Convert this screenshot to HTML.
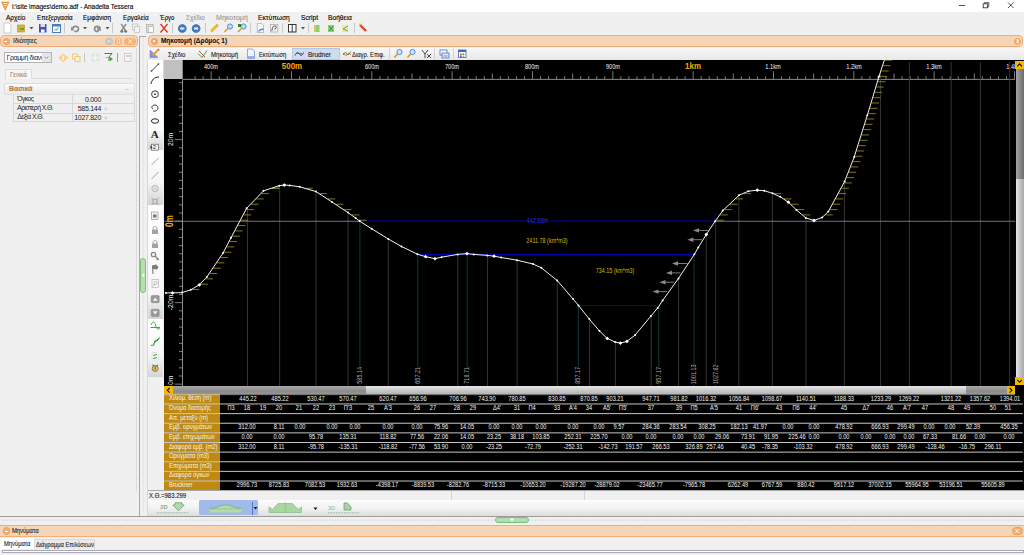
<!DOCTYPE html><html><head><meta charset="utf-8"><style>
html,body{margin:0;padding:0;}
body{width:1024px;height:555px;overflow:hidden;position:relative;background:#f0f0f0;font-family:"Liberation Sans", sans-serif;}
.t{position:absolute;white-space:nowrap;line-height:1;font-family:"Liberation Sans", sans-serif;}
svg{position:absolute;left:0;top:0;overflow:visible}
.hdr{position:absolute;box-sizing:border-box;border:1.5px solid #f3ae76;background:#f6d4b6;border-radius:4px;}
.circ{position:absolute;border-radius:50%;box-sizing:border-box;}
</style></head><body>
<div style="position:absolute;left:0px;top:0px;width:1024px;height:12px;background:#fff"></div>
<svg width="1024" height="555" style="pointer-events:none"><path d="M1.5,2 L9,2 L5.2,10.5 Z" fill="#f5a050" stroke="#f08a30" stroke-width="0.6"/><path d="M3.5,3.5 L7,3.5" stroke="#fff" stroke-width="0.8"/><path d="M4.5,5.5 L6.5,5.5" stroke="#fff" stroke-width="0.8"/><path d="M959,5.5 L965,5.5" stroke="#222" stroke-width="0.8"/><rect x="983.2" y="3.8" width="4.5" height="4" fill="none" stroke="#222" stroke-width="0.8"/><path d="M984.5,3.8 L984.5,2.6 L988.8,2.6 L988.8,6.6 L987.7,6.6" fill="none" stroke="#222" stroke-width="0.7"/><path d="M1008,2.5 L1013.5,8 M1013.5,2.5 L1008,8" stroke="#222" stroke-width="0.8"/></svg>
<div class="t" style="left:11.60px;top:2.5px;font-size:7px;color:#000;transform:scaleX(0.917);transform-origin:0 0;-webkit-text-stroke:0.12px #000;">I:\site images\demo.adf - Anadelta Tessera</div>
<div class="t" style="left:5.80px;top:13.6px;font-size:7px;color:#000;transform:scaleX(0.929);transform-origin:0 0;-webkit-text-stroke:0.12px #000;">Αρχείο</div>
<div class="t" style="left:36.50px;top:13.6px;font-size:7px;color:#000;transform:scaleX(0.885);transform-origin:0 0;-webkit-text-stroke:0.12px #000;">Επεξεργασία</div>
<div class="t" style="left:83.10px;top:13.6px;font-size:7px;color:#000;transform:scaleX(0.920);transform-origin:0 0;-webkit-text-stroke:0.12px #000;">Εμφάνιση</div>
<div class="t" style="left:122.60px;top:13.6px;font-size:7px;color:#000;transform:scaleX(0.901);transform-origin:0 0;-webkit-text-stroke:0.12px #000;">Εργαλεία</div>
<div class="t" style="left:159.80px;top:13.6px;font-size:7px;color:#000;transform:scaleX(0.854);transform-origin:0 0;-webkit-text-stroke:0.12px #000;">Έργο</div>
<div class="t" style="left:185.60px;top:13.6px;font-size:7px;color:#999;transform:scaleX(0.923);transform-origin:0 0;-webkit-text-stroke:0.12px #999;">Σχέδιο</div>
<div class="t" style="left:215.50px;top:13.6px;font-size:7px;color:#999;transform:scaleX(1.015);transform-origin:0 0;-webkit-text-stroke:0.12px #999;">Μηκοτομή</div>
<div class="t" style="left:258.35px;top:13.6px;font-size:7px;color:#000;transform:scaleX(0.960);transform-origin:0 0;-webkit-text-stroke:0.12px #000;">Εκτύπωση</div>
<div class="t" style="left:300.60px;top:13.6px;font-size:7px;color:#000;transform:scaleX(0.956);transform-origin:0 0;-webkit-text-stroke:0.12px #000;">Script</div>
<div class="t" style="left:328.35px;top:13.6px;font-size:7px;color:#000;transform:scaleX(0.951);transform-origin:0 0;-webkit-text-stroke:0.12px #000;">Βοήθεια</div>
<svg width="1024" height="555"><path d="M4,23 L9,23 L11,25 L11,33 L4,33 Z" fill="#fff" stroke="#bbb" stroke-width="0.7"/><rect x="17.5" y="25" width="7" height="7" fill="#d8b040" stroke="#c09020" stroke-width="0.6"/><path d="M20,29 L24,29" stroke="#3a3" stroke-width="1.5"/><path d="M29.5,27 L33.5,27 L31.5,29.5 Z" fill="#555"/><rect x="39" y="24" width="7.5" height="8.5" fill="#4050c0"/><rect x="40.5" y="24" width="4.5" height="3" fill="#ddd"/><rect x="41" y="29.5" width="3.5" height="3" fill="#fff"/><rect x="52.5" y="24.5" width="8" height="8" fill="#fff" stroke="#4a7cc8" stroke-width="1"/><rect x="52.5" y="24.5" width="8" height="2" fill="#4a7cc8"/><path d="M54.5,29 L56,30.5 L58.5,27.5" stroke="#2a2" stroke-width="1" fill="none"/><path d="M64.5,23 L64.5,33" stroke="#c8c8c8" stroke-width="1"/><path d="M72.5,29 C73,25.5 78.5,25.5 78.5,28.8 C78.5,31.5 75.5,32 74.5,31" fill="none" stroke="#8a8a8a" stroke-width="1.7"/><path d="M71,26.5 L71,30.5 L74.5,30.5 Z" fill="#8a8a8a"/><path d="M83,27 L87,27 L85,29.5 Z" fill="#555"/><path d="M100,28.5 C99.5,25.5 94.5,25.5 94.5,28.8 C94.5,31.5 97.5,32 98.5,31" fill="none" stroke="#8a8a8a" stroke-width="1.7"/><rect x="97" y="27" width="4" height="4" fill="#9a9a9a"/><path d="M105.5,27 L109.5,27 L107.5,29.5 Z" fill="#555"/><path d="M112.5,23 L112.5,33" stroke="#c8c8c8" stroke-width="1"/><path d="M121.2,24 L125.2,30 M126,24 L122,30" stroke="#8a8a8a" stroke-width="1.4"/><circle cx="121.8" cy="31.2" r="1.5" fill="#7a7a7a"/><circle cx="125.6" cy="31.2" r="1.5" fill="#7a7a7a"/><rect x="132.5" y="24" width="5" height="6" fill="#f4f4f4" stroke="#bbb" stroke-width="0.7"/><rect x="134.5" y="26.5" width="5" height="6" fill="#f4f4f4" stroke="#bbb" stroke-width="0.7"/><rect x="146.5" y="24.5" width="6.5" height="8" fill="#ddd" stroke="#aaa" stroke-width="0.7"/><rect x="148.5" y="26.5" width="5" height="6" fill="#f8f8f8" stroke="#aaa" stroke-width="0.6"/><path d="M160.5,24 L167.5,32.5 M167.5,24 L160.5,32.5" stroke="#e83020" stroke-width="1.3"/><path d="M172.5,23 L172.5,33" stroke="#c8c8c8" stroke-width="1"/><circle cx="182.3" cy="28.5" r="4.3" fill="#2e68b4"/><circle cx="182.3" cy="28.5" r="3.6" fill="none" stroke="#5a90d0" stroke-width="0.6"/><path d="M184.5,27.2 L181.70000000000002,27.2 L181.70000000000002,26 L179.70000000000002,28.5 L181.70000000000002,31 L181.70000000000002,29.8 L184.5,29.8 Z" fill="#cfe0f4"/><circle cx="196.1" cy="28.5" r="4.3" fill="#2e68b4"/><circle cx="196.1" cy="28.5" r="3.6" fill="none" stroke="#5a90d0" stroke-width="0.6"/><path d="M193.9,27.2 L196.7,27.2 L196.7,26 L198.7,28.5 L196.7,31 L196.7,29.8 L193.9,29.8 Z" fill="#cfe0f4"/><path d="M205.5,23 L205.5,33" stroke="#c8c8c8" stroke-width="1"/><path d="M211,31.5 L218,24.5" stroke="#e8b830" stroke-width="2.8"/><circle cx="230" cy="26.5" r="2.6" fill="#bcd8f0" stroke="#4a8ad0" stroke-width="0.9"/><path d="M228,28.5 L224.5,32" stroke="#e89020" stroke-width="1.5"/><circle cx="243.5" cy="26.5" r="2.6" fill="#bcd8f0" stroke="#4a8ad0" stroke-width="0.9"/><path d="M241.5,28.5 L238,32" stroke="#e89020" stroke-width="1.5"/><rect x="238" y="24" width="3" height="3" fill="#2a8a2a"/><path d="M250.5,23 L250.5,33" stroke="#c8c8c8" stroke-width="1"/><path d="M257.3,23.5 L261.8,23.5 L263.5,25.2 L263.5,32.5 L257.3,32.5 Z" fill="#f8f8f8" stroke="#999" stroke-width="0.6"/><path d="M258.5,31.5 C260,29 261.5,29.5 263.5,29" stroke="#5a8ad0" stroke-width="1.3" fill="none"/><rect x="270.5" y="24.5" width="7.3" height="7.5" fill="#f4f4f4" stroke="#999" stroke-width="0.6"/><path d="M271.8,31 C272.5,27 273,25.8 275,26 C277,26.3 276.5,29 274.5,29" stroke="#222" stroke-width="0.8" fill="none"/><path d="M282.5,23 L282.5,33" stroke="#c8c8c8" stroke-width="1"/><rect x="288.5" y="24.5" width="7.5" height="7.5" fill="#fff" stroke="#222" stroke-width="0.9"/><path d="M292.2,24.5 L292.2,32" stroke="#222" stroke-width="0.9"/><path d="M301,27 L305,27 L303,29.5 Z" fill="#555"/><path d="M308.5,23 L308.5,33" stroke="#c8c8c8" stroke-width="1"/><rect x="314" y="25" width="5.5" height="7" fill="#8cd070"/><rect x="314" y="25" width="2" height="7" fill="#e8c050"/><rect x="328" y="25" width="6" height="7" fill="#8cd070"/><path d="M329,26 L333,31 M333,26 L329,31" stroke="#2a8a2a" stroke-width="0.9"/><rect x="342" y="25" width="6" height="7" fill="#f0e8a0"/><path d="M348,26 L343,29 L348,31" stroke="#5ab050" stroke-width="1" fill="none"/><path d="M354.5,23 L354.5,33" stroke="#c8c8c8" stroke-width="1"/><path d="M360,25 L366,31" stroke="#e04030" stroke-width="2.4"/><path d="M359.5,24.5 L362,24.5" stroke="#e8b830" stroke-width="1.5"/></svg>
<div class="hdr" style="left:0.3px;top:34.6px;width:138.2px;height:12.4px;border-radius:4px"></div>
<div class="circ" style="left:2.5px;top:37.5px;width:7.5px;height:7.5px;background:#f0b07c;border:0.8px solid #e09a60"></div>
<div style="position:absolute;left:4.3px;top:41px;width:3px;height:0.9px;background:#fff"></div>
<div class="t" style="left:12.60px;top:37.3px;font-size:7px;color:#222;transform:scaleX(0.871);transform-origin:0 0;-webkit-text-stroke:0.12px #222;">Ιδιότητες</div>
<div class="circ" style="left:105.3px;top:37.6px;width:7.6px;height:7.6px;background:#c4c4c4"></div>
<div class="circ" style="left:115px;top:37.6px;width:7.2px;height:7.6px;background:#f2b27a"></div>
<div style="position:absolute;left:124.4px;top:37.6px;width:11.8px;height:7.6px;border-radius:4px;background:#f2b27a"></div>
<svg width="1024" height="555"><path d="M107.2,42.2 L109,40.4 L110.8,42.2" stroke="#fff" stroke-width="0.8" fill="none"/><rect x="117.4" y="39.3" width="2.4" height="4.2" rx="1" fill="none" stroke="#fff" stroke-width="0.7"/><path d="M128.3,39.5 L132.3,43.3 M132.3,39.5 L128.3,43.3" stroke="#fff" stroke-width="0.9"/></svg>
<div style="position:absolute;left:4.3px;top:52px;width:47.5px;height:11px;box-sizing:border-box;border:1px solid #b4b4b4;background:#fff"></div>
<div style="position:absolute;left:42.3px;top:53px;width:8.5px;height:9px;background:#e6e6e6"></div>
<div class="t" style="left:6.5px;top:54.3px;font-size:7px;color:#1a1a4a;letter-spacing:-0.4px;width:35px;overflow:hidden">Γραμμή διανο</div>
<svg width="1024" height="555"><path d="M44.8,56.6 L46.5,58.4 L48.3,56.6" stroke="#555" stroke-width="0.6" fill="none"/><path d="M58.8,57.8 L63.2,54 L67.7,57.8 L63.2,61.6 Z" fill="#f8d890" stroke="#f0c060" stroke-width="0.7"/><path d="M63.2,55.5 L63.2,60" stroke="#fff" stroke-width="1.1"/><rect x="72.5" y="54" width="5" height="5" fill="#fff4d8" stroke="#f0c060" stroke-width="0.8"/><rect x="75" y="56.5" width="5" height="5" fill="#fff4d8" stroke="#f0c060" stroke-width="0.8"/><path d="M84.5,53 L84.5,62" stroke="#aaa" stroke-width="0.6"/><rect x="92" y="54" width="7" height="7" fill="#e8e8e8" stroke="#d4d4d4" stroke-width="0.5"/><path d="M95.5,54 L95.5,61 M92,57.5 L99,57.5" stroke="#fff" stroke-width="0.6"/><path d="M104.5,53.5 L112,53.5 L109,57 L109,61" stroke="#444" stroke-width="0.8" fill="none"/><path d="M105.5,57.5 L108,57.5" stroke="#d0a040" stroke-width="1"/><path d="M109.5,56.5 L113,59 L109.5,61.5 Z" fill="#30b030"/><path d="M117.5,53 L117.5,62" stroke="#666" stroke-width="0.6"/><rect x="124.5" y="53.5" width="6.5" height="8" fill="#f4f4f4" stroke="#bbb" stroke-width="0.6"/><path d="M126,56 L130,56" stroke="#e8a050" stroke-width="1"/></svg>
<div style="position:absolute;left:5px;top:69px;width:26.7px;height:10px;box-sizing:border-box;border:1px solid #dcdcdc;border-bottom:none;background:#f6f6f6"></div>
<div class="t" style="left:10.40px;top:71.2px;font-size:7px;color:#b08660;transform:scaleX(0.862);transform-origin:0 0;-webkit-text-stroke:0.12px #b08660;">Γενικά</div>
<div style="position:absolute;left:31.5px;top:78.3px;width:101.5px;height:1px;background:#dcdcdc"></div>
<div style="position:absolute;left:4px;top:78.3px;width:1px;height:1px;background:#dcdcdc"></div>
<div style="position:absolute;left:4px;top:83px;width:130.5px;height:11.5px;box-sizing:border-box;border:1px solid #dedede;border-radius:2px;background:linear-gradient(#fbfbfb,#e9e9e9)"></div>
<div class="t" style="left:8.60px;top:85.4px;font-size:7.6px;color:#b07a40;font-weight:bold;transform:scaleX(0.903);transform-origin:0 0;-webkit-text-stroke:0.12px #b07a40;">Βασικά</div>
<div style="position:absolute;left:124.5px;top:88.8px;width:4px;height:0.8px;background:#cfcfcf"></div>
<div style="position:absolute;left:13px;top:94.5px;width:121.5px;height:27.5px;box-sizing:border-box;border:1px solid #d8d8d8;border-top:none;background:#f0f0f0"></div>
<div style="position:absolute;left:13px;top:103.4px;width:121.5px;height:1px;background:#d8d8d8"></div>
<div style="position:absolute;left:13px;top:112.5px;width:121.5px;height:1px;background:#d8d8d8"></div>
<div style="position:absolute;left:72.3px;top:94.5px;width:1px;height:27.5px;background:#d8d8d8"></div>
<div class="t" style="left:17.3px;top:96.3px;font-size:6.8px;color:#222;letter-spacing:-0.55px">Όγκος</div>
<div class="t" style="left:60px;top:96.3px;width:41px;text-align:right;font-size:7px;color:#222;letter-spacing:-0.3px">0.000</div>
<div class="t" style="left:17.3px;top:105.4px;font-size:6.8px;color:#222;letter-spacing:-0.55px">Αριστερή Χ.Θ.</div>
<div class="t" style="left:60px;top:105.4px;width:41px;text-align:right;font-size:7px;color:#222;letter-spacing:-0.3px">585.144</div>
<svg width="1024" height="555"><path d="M104,109.0 L107.5,109.0 M105.75,107.2 L105.75,110.80000000000001" stroke="#c8c8c8" stroke-width="0.7"/></svg>
<div class="t" style="left:17.3px;top:114.4px;font-size:6.8px;color:#222;letter-spacing:-0.55px">Δεξιά Χ.Θ.</div>
<div class="t" style="left:60px;top:114.4px;width:41px;text-align:right;font-size:7px;color:#222;letter-spacing:-0.3px">1027.820</div>
<svg width="1024" height="555"><path d="M104,118.0 L107.5,118.0 M105.75,116.2 L105.75,119.80000000000001" stroke="#c8c8c8" stroke-width="0.7"/></svg>
<div style="position:absolute;left:136.3px;top:48px;width:0.8px;height:466px;background:#dcdcdc"></div>
<div style="position:absolute;left:139px;top:35.5px;width:1px;height:480px;background:#a8a8a8"></div>
<div style="position:absolute;left:139px;top:35.5px;width:7px;height:1px;background:#a8a8a8"></div>
<svg width="1024" height="555"><path d="M143.2,38 L143.2,512" stroke="#c8c8c8" stroke-width="0.8" stroke-dasharray="1 1.6"/></svg>
<div style="position:absolute;left:140.3px;top:258px;width:5.5px;height:35px;box-sizing:border-box;border:1px solid #80c080;border-radius:3px;background:#b8deb0"></div>
<svg width="1024" height="555"><path d="M144.2,273 L141.8,275.3 L144.2,277.6 Z" fill="#fff"/></svg>
<div class="hdr" style="left:147.5px;top:34.6px;width:875.8px;height:12.4px;border-radius:4px"></div>
<div class="circ" style="left:150.5px;top:37.6px;width:7.5px;height:7.5px;background:#f0b07c;border:0.8px solid #e09a60"></div>
<div style="position:absolute;left:153.2px;top:40.3px;width:2px;height:2px;background:#fff;border-radius:1px"></div>
<div class="t" style="left:160.60px;top:37.4px;font-size:7.5px;color:#111;font-weight:bold;transform:scaleX(0.857);transform-origin:0 0;-webkit-text-stroke:0.12px #111;">Μηκοτομή (Δρόμος 1)</div>
<div class="circ" style="left:1014.2px;top:37.6px;width:7px;height:7px;background:#f2b27a;border:0.6px solid #e8a060"></div>
<svg width="1024" height="555"><path d="M1016.4,40.2 L1017.7,38.9 L1019,40.2 Z" fill="#fff"/><path d="M1016.4,42.4 L1017.7,43.6 L1019,42.4 Z" fill="#fff"/><rect x="1016.9" y="39.9" width="1.6" height="2.6" fill="#fff" opacity="0.8"/></svg>
<div style="position:absolute;left:147.5px;top:47.5px;width:876.5px;height:12.5px;background:linear-gradient(#f8f8f8,#e8e8e8)"></div>
<div style="position:absolute;left:291.8px;top:47.5px;width:47.8px;height:12.7px;box-sizing:border-box;border:1px solid #b4c8e8;background:#cddcf2"></div>
<div class="t" style="left:167.60px;top:51.1px;font-size:7px;color:#222;transform:scaleX(0.850);transform-origin:0 0;-webkit-text-stroke:0.12px #222;">Σχέδιο</div>
<div class="t" style="left:211.00px;top:51.1px;font-size:7px;color:#222;transform:scaleX(0.866);transform-origin:0 0;-webkit-text-stroke:0.12px #222;">Μηκοτομή</div>
<div class="t" style="left:258.60px;top:51.1px;font-size:7px;color:#222;transform:scaleX(0.820);transform-origin:0 0;-webkit-text-stroke:0.12px #222;">Εκτύπωση</div>
<div class="t" style="left:308.10px;top:51.1px;font-size:7px;color:#222;transform:scaleX(0.920);transform-origin:0 0;-webkit-text-stroke:0.12px #222;">Brudner</div>
<div class="t" style="left:351.60px;top:51.1px;font-size:7px;color:#222;transform:scaleX(0.832);transform-origin:0 0;-webkit-text-stroke:0.12px #222;">Διαγρ. Επιφ.</div>
<svg width="1024" height="555"><path d="M150,57.5 L150,50 L158,57.5 Z" fill="#8890e8" stroke="#6a78d8" stroke-width="0.5"/><path d="M152.5,55.5 L158.5,49.5" stroke="#e8a030" stroke-width="1.8"/><path d="M158,49 L159.3,50.3" stroke="#e05050" stroke-width="1.2"/><path d="M198,53.5 L202,57.5 L207,50.5" stroke="#30b030" stroke-width="1" fill="none"/><path d="M199,51 L205,57" stroke="#c03030" stroke-width="0.9"/><path d="M247.5,49 L252.5,49 L254.5,51 L254.5,58.5 L247.5,58.5 Z" fill="#f0f4ff" stroke="#6a8ad0" stroke-width="0.7"/><path d="M248,57 L254,57" stroke="#5a8ad0" stroke-width="1.2"/><path d="M295,55.5 C296.5,52 298,52 299.5,54 C301,56 302,56 303.5,52.5" stroke="#222" stroke-width="0.9" fill="none"/><path d="M296,53.5 L302,53.5" stroke="#d03030" stroke-width="0.8"/><path d="M343,55 L345.5,52 L348,55 L351,51.5" stroke="#30a030" stroke-width="0.9" fill="none"/><path d="M343,53 L346,55.5 L349,53 L351,55" stroke="#d03030" stroke-width="0.8" fill="none"/><path d="M389.5,48.5 L389.5,59" stroke="#c8c8c8" stroke-width="0.8"/><circle cx="399.5" cy="52" r="2.6" fill="#cde4f8" stroke="#3a88d8" stroke-width="0.9"/><path d="M397.7,53.8 L394.5,57.5" stroke="#e89020" stroke-width="1.5"/><circle cx="412.5" cy="52" r="2.6" fill="#cde4f8" stroke="#3a88d8" stroke-width="0.9"/><path d="M410.7,53.8 L407.5,57.5" stroke="#e89020" stroke-width="1.5"/><path d="M422,50 L425,54 L428,50 M425,54 L425,58" stroke="#222" stroke-width="0.8" fill="none"/><path d="M427,58 L431,54" stroke="#222" stroke-width="0.6"/><path d="M427,54 L431,58 M431,54 L427,58" stroke="#222" stroke-width="0.7"/><path d="M434.5,48.5 L434.5,59" stroke="#c8c8c8" stroke-width="0.8"/><rect x="440" y="50" width="7" height="5" fill="#fff" stroke="#3a78c8" stroke-width="0.8"/><rect x="442" y="53" width="7" height="5" fill="#e0ecfa" stroke="#3a78c8" stroke-width="0.8"/><path d="M443.5,56 L447.5,56" stroke="#d04040" stroke-width="0.8"/><path d="M453.5,48.5 L453.5,59" stroke="#c8c8c8" stroke-width="0.8"/><rect x="458.5" y="50" width="7.5" height="7.5" fill="#fff" stroke="#3a68c0" stroke-width="0.8"/><rect x="458.5" y="50" width="7.5" height="2" fill="#3a68c0"/><rect x="460" y="53.5" width="1.8" height="1.5" fill="#e05030"/><rect x="462.5" y="53.5" width="1.8" height="1.5" fill="#30a030"/><rect x="460" y="55.5" width="1.8" height="1.5" fill="#3a78c8"/><rect x="462.5" y="55.5" width="1.8" height="1.5" fill="#e0b030"/></svg>
<div style="position:absolute;left:146px;top:60px;width:1.5px;height:456px;background:#f0f0f0"></div>
<div style="position:absolute;left:147.8px;top:60px;width:15.7px;height:90px;background:linear-gradient(#ffffff 0%,#fbfbfb 78%,#d4d4d4 100%)"></div>
<div style="position:absolute;left:147.8px;top:150px;width:15.7px;height:54.5px;background:linear-gradient(#ffffff 0%,#f4f4f4 60%,#d4d4d4 100%)"></div>
<div style="position:absolute;left:147.8px;top:204.5px;width:15.7px;height:114.5px;background:linear-gradient(#ffffff 0%,#f6f6f6 78%,#d4d4d4 100%)"></div>
<div style="position:absolute;left:147.8px;top:319px;width:15.7px;height:57.5px;background:linear-gradient(#ffffff 0%,#f6f6f6 65%,#d4d4d4 100%)"></div>
<div style="position:absolute;left:147.8px;top:376.5px;width:15.7px;height:113px;background:#f0f0f0"></div>
<div class="t" style="left:150.8px;top:129.3px;font-size:11px;font-family:'Liberation Serif',serif;font-weight:bold;color:#222">A</div>
<svg width="1024" height="555"><path d="M151.5,71 L158.5,64" stroke="#222" stroke-width="0.9"/><circle cx="151.5" cy="71" r="0.8" fill="#222"/><circle cx="158.5" cy="64" r="0.8" fill="#222"/><path d="M151,84 C151.5,80 154.5,77 159,77" stroke="#222" stroke-width="1" fill="none"/><circle cx="155" cy="94.2" r="3.4" fill="none" stroke="#222" stroke-width="0.9"/><circle cx="155" cy="94.2" r="0.9" fill="#222"/><path d="M153,109 C150.5,107.5 152.5,105 155,105 C158.5,105 159,110 155.5,111 L153,111" stroke="#222" stroke-width="0.9" fill="none"/><ellipse cx="155" cy="121" rx="3.6" ry="2.2" fill="none" stroke="#222" stroke-width="1"/><rect x="151.5" y="144.2" width="7" height="6" fill="#eee" stroke="#555" stroke-width="0.6"/><path d="M150.5,145.7 L152.5,147.2 L150.5,148.7" fill="#222"/><text x="153" y="149.2" font-size="5" font-family="Liberation Sans" fill="#222">2</text><path d="M151.5,165 L158.5,158" stroke="#9c9c9c" stroke-width="0.9"/><path d="M151.5,179 L158.5,172" stroke="#9c9c9c" stroke-width="0.9"/><circle cx="155" cy="188.5" r="3.2" fill="none" stroke="#a8a8a8" stroke-width="0.8"/><path d="M153.3,186.8 L156.7,190.2 M156.7,186.8 L153.3,190.2" stroke="#a8a8a8" stroke-width="0.6"/><path d="M151.5,198 C154,200 156,200 158.5,198 M151.5,205 C154,203 156,203 158.5,205 M153,199.5 L153,203.5 M157,199.5 L157,203.5" stroke="#9a9a9a" stroke-width="0.9" fill="none"/><rect x="151.5" y="212" width="6.5" height="7.5" fill="#f4f4f4" stroke="#888" stroke-width="0.6"/><rect x="153" y="214.5" width="3.5" height="3" fill="#7a7a7a"/><rect x="152" y="229.5" width="6" height="4.5" fill="#a2a2a2"/><path d="M153.2,229.5 L153.2,228.0 C153.2,226.0 156.8,226.0 156.8,228.0 L156.8,229.5" stroke="#a2a2a2" stroke-width="1" fill="none"/><rect x="152" y="243.5" width="6" height="4.5" fill="#a2a2a2"/><path d="M153.2,243.5 L153.2,242.0 C153.2,240.0 156.8,240.0 156.8,242.0 L156.8,243.5" stroke="#a2a2a2" stroke-width="1" fill="none"/><circle cx="153.5" cy="254.5" r="2.2" fill="none" stroke="#8a8a8a" stroke-width="1.3"/><path d="M155,256 L158.8,259.8 M157.8,258.8 L156.6,260" stroke="#8a8a8a" stroke-width="1.4"/><path d="M153,274 L152.5,265.5" stroke="#707070" stroke-width="1"/><path d="M152.5,265.5 L156,264.5 L158.5,267 L157,269.5 L153,269" fill="#7a7a7a"/><rect x="152" y="279.5" width="6.5" height="8" fill="#f8f8f8" stroke="#aaa" stroke-width="0.6"/><circle cx="155.5" cy="283" r="1.6" fill="none" stroke="#999" stroke-width="0.6"/><path d="M154.5,284.2 L153,286" stroke="#999" stroke-width="0.7"/><rect x="151.2" y="295.5" width="8" height="7.2" rx="1" fill="#9a9a9a" stroke="#808080" stroke-width="0.5"/><path d="M152.8,300.8 L155.2,297.6 L157.6,300.8 Z" fill="#f4f4f4"/><rect x="151.2" y="309.3" width="8" height="7.2" rx="1" fill="#9a9a9a" stroke="#808080" stroke-width="0.5"/><path d="M152.8,311.3 L155.2,314.5 L157.6,311.3 Z" fill="#f4f4f4"/><path d="M150.5,327.5 L160,327.5" stroke="#8a6a30" stroke-width="0.9"/><path d="M151,325 C152.5,321 154.5,321 155.5,325 C156.5,329 158.5,330.5 159.5,328" stroke="#30b030" stroke-width="1" fill="none"/><path d="M150.8,345.5 L153.5,345 L155,341.5 L157.5,340 L159.8,337.5" stroke="#30a830" stroke-width="1.1" fill="none"/><circle cx="155" cy="341.5" r="0.7" fill="#205020"/><circle cx="157.5" cy="340" r="0.7" fill="#205020"/><path d="M152,352.5 L157,352.5 L158.5,354 L158.5,360 L152,360 Z" fill="#f8f8f8" stroke="#ccc" stroke-width="0.5"/><path d="M153.2,355.5 L157,354.5 M153.2,358.5 L157,357.5" stroke="#30a030" stroke-width="1.1"/><circle cx="155.2" cy="368.5" r="3" fill="#f0c050" stroke="#707070" stroke-width="0.9"/><path d="M152.3,364.8 L154,366 M158.1,364.8 L156.4,366 M155.2,366.5 L155.2,370" stroke="#444" stroke-width="0.8"/></svg>
<div style="position:absolute;left:163.5px;top:60px;width:851.5px;height:326px;background:#000"></div>
<svg width="1024" height="555"><rect x="163.5" y="60" width="19.2" height="19" fill="#c0c0c0"/><path d="M195.11,76.20 L195.11,79.5" stroke="#8a8a8a" stroke-width="0.9"/><path d="M203.14,76.20 L203.14,79.5" stroke="#8a8a8a" stroke-width="0.9"/><path d="M211.17,71.20 L211.17,79.5" stroke="#8a8a8a" stroke-width="0.9"/><path d="M219.21,76.20 L219.21,79.5" stroke="#8a8a8a" stroke-width="0.9"/><path d="M227.24,76.20 L227.24,79.5" stroke="#8a8a8a" stroke-width="0.9"/><path d="M235.27,76.20 L235.27,79.5" stroke="#8a8a8a" stroke-width="0.9"/><path d="M243.31,76.20 L243.31,79.5" stroke="#8a8a8a" stroke-width="0.9"/><path d="M251.34,73.50 L251.34,79.5" stroke="#8a8a8a" stroke-width="0.9"/><path d="M259.37,76.20 L259.37,79.5" stroke="#8a8a8a" stroke-width="0.9"/><path d="M267.41,76.20 L267.41,79.5" stroke="#8a8a8a" stroke-width="0.9"/><path d="M275.44,76.20 L275.44,79.5" stroke="#8a8a8a" stroke-width="0.9"/><path d="M283.47,76.20 L283.47,79.5" stroke="#8a8a8a" stroke-width="0.9"/><path d="M291.50,71.20 L291.50,79.5" stroke="#8a8a8a" stroke-width="0.9"/><path d="M299.54,76.20 L299.54,79.5" stroke="#8a8a8a" stroke-width="0.9"/><path d="M307.57,76.20 L307.57,79.5" stroke="#8a8a8a" stroke-width="0.9"/><path d="M315.60,76.20 L315.60,79.5" stroke="#8a8a8a" stroke-width="0.9"/><path d="M323.64,76.20 L323.64,79.5" stroke="#8a8a8a" stroke-width="0.9"/><path d="M331.67,73.50 L331.67,79.5" stroke="#8a8a8a" stroke-width="0.9"/><path d="M339.70,76.20 L339.70,79.5" stroke="#8a8a8a" stroke-width="0.9"/><path d="M347.74,76.20 L347.74,79.5" stroke="#8a8a8a" stroke-width="0.9"/><path d="M355.77,76.20 L355.77,79.5" stroke="#8a8a8a" stroke-width="0.9"/><path d="M363.80,76.20 L363.80,79.5" stroke="#8a8a8a" stroke-width="0.9"/><path d="M371.83,71.20 L371.83,79.5" stroke="#8a8a8a" stroke-width="0.9"/><path d="M379.87,76.20 L379.87,79.5" stroke="#8a8a8a" stroke-width="0.9"/><path d="M387.90,76.20 L387.90,79.5" stroke="#8a8a8a" stroke-width="0.9"/><path d="M395.93,76.20 L395.93,79.5" stroke="#8a8a8a" stroke-width="0.9"/><path d="M403.97,76.20 L403.97,79.5" stroke="#8a8a8a" stroke-width="0.9"/><path d="M412.00,73.50 L412.00,79.5" stroke="#8a8a8a" stroke-width="0.9"/><path d="M420.03,76.20 L420.03,79.5" stroke="#8a8a8a" stroke-width="0.9"/><path d="M428.07,76.20 L428.07,79.5" stroke="#8a8a8a" stroke-width="0.9"/><path d="M436.10,76.20 L436.10,79.5" stroke="#8a8a8a" stroke-width="0.9"/><path d="M444.13,76.20 L444.13,79.5" stroke="#8a8a8a" stroke-width="0.9"/><path d="M452.16,71.20 L452.16,79.5" stroke="#8a8a8a" stroke-width="0.9"/><path d="M460.20,76.20 L460.20,79.5" stroke="#8a8a8a" stroke-width="0.9"/><path d="M468.23,76.20 L468.23,79.5" stroke="#8a8a8a" stroke-width="0.9"/><path d="M476.26,76.20 L476.26,79.5" stroke="#8a8a8a" stroke-width="0.9"/><path d="M484.30,76.20 L484.30,79.5" stroke="#8a8a8a" stroke-width="0.9"/><path d="M492.33,73.50 L492.33,79.5" stroke="#8a8a8a" stroke-width="0.9"/><path d="M500.36,76.20 L500.36,79.5" stroke="#8a8a8a" stroke-width="0.9"/><path d="M508.40,76.20 L508.40,79.5" stroke="#8a8a8a" stroke-width="0.9"/><path d="M516.43,76.20 L516.43,79.5" stroke="#8a8a8a" stroke-width="0.9"/><path d="M524.46,76.20 L524.46,79.5" stroke="#8a8a8a" stroke-width="0.9"/><path d="M532.49,71.20 L532.49,79.5" stroke="#8a8a8a" stroke-width="0.9"/><path d="M540.53,76.20 L540.53,79.5" stroke="#8a8a8a" stroke-width="0.9"/><path d="M548.56,76.20 L548.56,79.5" stroke="#8a8a8a" stroke-width="0.9"/><path d="M556.59,76.20 L556.59,79.5" stroke="#8a8a8a" stroke-width="0.9"/><path d="M564.63,76.20 L564.63,79.5" stroke="#8a8a8a" stroke-width="0.9"/><path d="M572.66,73.50 L572.66,79.5" stroke="#8a8a8a" stroke-width="0.9"/><path d="M580.69,76.20 L580.69,79.5" stroke="#8a8a8a" stroke-width="0.9"/><path d="M588.73,76.20 L588.73,79.5" stroke="#8a8a8a" stroke-width="0.9"/><path d="M596.76,76.20 L596.76,79.5" stroke="#8a8a8a" stroke-width="0.9"/><path d="M604.79,76.20 L604.79,79.5" stroke="#8a8a8a" stroke-width="0.9"/><path d="M612.82,71.20 L612.82,79.5" stroke="#8a8a8a" stroke-width="0.9"/><path d="M620.86,76.20 L620.86,79.5" stroke="#8a8a8a" stroke-width="0.9"/><path d="M628.89,76.20 L628.89,79.5" stroke="#8a8a8a" stroke-width="0.9"/><path d="M636.92,76.20 L636.92,79.5" stroke="#8a8a8a" stroke-width="0.9"/><path d="M644.96,76.20 L644.96,79.5" stroke="#8a8a8a" stroke-width="0.9"/><path d="M652.99,73.50 L652.99,79.5" stroke="#8a8a8a" stroke-width="0.9"/><path d="M661.02,76.20 L661.02,79.5" stroke="#8a8a8a" stroke-width="0.9"/><path d="M669.06,76.20 L669.06,79.5" stroke="#8a8a8a" stroke-width="0.9"/><path d="M677.09,76.20 L677.09,79.5" stroke="#8a8a8a" stroke-width="0.9"/><path d="M685.12,76.20 L685.12,79.5" stroke="#8a8a8a" stroke-width="0.9"/><path d="M693.15,71.20 L693.15,79.5" stroke="#8a8a8a" stroke-width="0.9"/><path d="M701.19,76.20 L701.19,79.5" stroke="#8a8a8a" stroke-width="0.9"/><path d="M709.22,76.20 L709.22,79.5" stroke="#8a8a8a" stroke-width="0.9"/><path d="M717.25,76.20 L717.25,79.5" stroke="#8a8a8a" stroke-width="0.9"/><path d="M725.29,76.20 L725.29,79.5" stroke="#8a8a8a" stroke-width="0.9"/><path d="M733.32,73.50 L733.32,79.5" stroke="#8a8a8a" stroke-width="0.9"/><path d="M741.35,76.20 L741.35,79.5" stroke="#8a8a8a" stroke-width="0.9"/><path d="M749.39,76.20 L749.39,79.5" stroke="#8a8a8a" stroke-width="0.9"/><path d="M757.42,76.20 L757.42,79.5" stroke="#8a8a8a" stroke-width="0.9"/><path d="M765.45,76.20 L765.45,79.5" stroke="#8a8a8a" stroke-width="0.9"/><path d="M773.48,71.20 L773.48,79.5" stroke="#8a8a8a" stroke-width="0.9"/><path d="M781.52,76.20 L781.52,79.5" stroke="#8a8a8a" stroke-width="0.9"/><path d="M789.55,76.20 L789.55,79.5" stroke="#8a8a8a" stroke-width="0.9"/><path d="M797.58,76.20 L797.58,79.5" stroke="#8a8a8a" stroke-width="0.9"/><path d="M805.62,76.20 L805.62,79.5" stroke="#8a8a8a" stroke-width="0.9"/><path d="M813.65,73.50 L813.65,79.5" stroke="#8a8a8a" stroke-width="0.9"/><path d="M821.68,76.20 L821.68,79.5" stroke="#8a8a8a" stroke-width="0.9"/><path d="M829.72,76.20 L829.72,79.5" stroke="#8a8a8a" stroke-width="0.9"/><path d="M837.75,76.20 L837.75,79.5" stroke="#8a8a8a" stroke-width="0.9"/><path d="M845.78,76.20 L845.78,79.5" stroke="#8a8a8a" stroke-width="0.9"/><path d="M853.81,71.20 L853.81,79.5" stroke="#8a8a8a" stroke-width="0.9"/><path d="M861.85,76.20 L861.85,79.5" stroke="#8a8a8a" stroke-width="0.9"/><path d="M869.88,76.20 L869.88,79.5" stroke="#8a8a8a" stroke-width="0.9"/><path d="M877.91,76.20 L877.91,79.5" stroke="#8a8a8a" stroke-width="0.9"/><path d="M885.95,76.20 L885.95,79.5" stroke="#8a8a8a" stroke-width="0.9"/><path d="M893.98,73.50 L893.98,79.5" stroke="#8a8a8a" stroke-width="0.9"/><path d="M902.01,76.20 L902.01,79.5" stroke="#8a8a8a" stroke-width="0.9"/><path d="M910.05,76.20 L910.05,79.5" stroke="#8a8a8a" stroke-width="0.9"/><path d="M918.08,76.20 L918.08,79.5" stroke="#8a8a8a" stroke-width="0.9"/><path d="M926.11,76.20 L926.11,79.5" stroke="#8a8a8a" stroke-width="0.9"/><path d="M934.14,71.20 L934.14,79.5" stroke="#8a8a8a" stroke-width="0.9"/><path d="M942.18,76.20 L942.18,79.5" stroke="#8a8a8a" stroke-width="0.9"/><path d="M950.21,76.20 L950.21,79.5" stroke="#8a8a8a" stroke-width="0.9"/><path d="M958.24,76.20 L958.24,79.5" stroke="#8a8a8a" stroke-width="0.9"/><path d="M966.28,76.20 L966.28,79.5" stroke="#8a8a8a" stroke-width="0.9"/><path d="M974.31,73.50 L974.31,79.5" stroke="#8a8a8a" stroke-width="0.9"/><path d="M982.34,76.20 L982.34,79.5" stroke="#8a8a8a" stroke-width="0.9"/><path d="M990.38,76.20 L990.38,79.5" stroke="#8a8a8a" stroke-width="0.9"/><path d="M998.41,76.20 L998.41,79.5" stroke="#8a8a8a" stroke-width="0.9"/><path d="M1006.44,76.20 L1006.44,79.5" stroke="#8a8a8a" stroke-width="0.9"/><path d="M1014.47,71.20 L1014.47,79.5" stroke="#8a8a8a" stroke-width="0.9"/><path d="M182.7,79.4 L1015,79.4" stroke="#8a8a8a" stroke-width="1"/><path d="M182.5,79.5 L182.5,386" stroke="#8a8a8a" stroke-width="1"/><path d="M179.10,82.60 L182.5,82.60" stroke="#8a8a8a" stroke-width="0.9"/><path d="M179.10,90.75 L182.5,90.75" stroke="#8a8a8a" stroke-width="0.9"/><path d="M179.10,98.90 L182.5,98.90" stroke="#8a8a8a" stroke-width="0.9"/><path d="M179.10,107.05 L182.5,107.05" stroke="#8a8a8a" stroke-width="0.9"/><path d="M179.10,115.20 L182.5,115.20" stroke="#8a8a8a" stroke-width="0.9"/><path d="M179.10,123.35 L182.5,123.35" stroke="#8a8a8a" stroke-width="0.9"/><path d="M179.10,131.50 L182.5,131.50" stroke="#8a8a8a" stroke-width="0.9"/><path d="M174.80,139.65 L182.5,139.65" stroke="#8a8a8a" stroke-width="0.9"/><path d="M179.10,147.80 L182.5,147.80" stroke="#8a8a8a" stroke-width="0.9"/><path d="M179.10,155.95 L182.5,155.95" stroke="#8a8a8a" stroke-width="0.9"/><path d="M179.10,164.10 L182.5,164.10" stroke="#8a8a8a" stroke-width="0.9"/><path d="M179.10,172.25 L182.5,172.25" stroke="#8a8a8a" stroke-width="0.9"/><path d="M179.10,180.40 L182.5,180.40" stroke="#8a8a8a" stroke-width="0.9"/><path d="M179.10,188.55 L182.5,188.55" stroke="#8a8a8a" stroke-width="0.9"/><path d="M179.10,196.70 L182.5,196.70" stroke="#8a8a8a" stroke-width="0.9"/><path d="M179.10,204.85 L182.5,204.85" stroke="#8a8a8a" stroke-width="0.9"/><path d="M179.10,213.00 L182.5,213.00" stroke="#8a8a8a" stroke-width="0.9"/><path d="M174.80,221.15 L182.5,221.15" stroke="#8a8a8a" stroke-width="0.9"/><path d="M179.10,229.30 L182.5,229.30" stroke="#8a8a8a" stroke-width="0.9"/><path d="M179.10,237.45 L182.5,237.45" stroke="#8a8a8a" stroke-width="0.9"/><path d="M179.10,245.60 L182.5,245.60" stroke="#8a8a8a" stroke-width="0.9"/><path d="M179.10,253.75 L182.5,253.75" stroke="#8a8a8a" stroke-width="0.9"/><path d="M179.10,261.90 L182.5,261.90" stroke="#8a8a8a" stroke-width="0.9"/><path d="M179.10,270.05 L182.5,270.05" stroke="#8a8a8a" stroke-width="0.9"/><path d="M179.10,278.20 L182.5,278.20" stroke="#8a8a8a" stroke-width="0.9"/><path d="M179.10,286.35 L182.5,286.35" stroke="#8a8a8a" stroke-width="0.9"/><path d="M179.10,294.50 L182.5,294.50" stroke="#8a8a8a" stroke-width="0.9"/><path d="M174.80,302.65 L182.5,302.65" stroke="#8a8a8a" stroke-width="0.9"/><path d="M179.10,310.80 L182.5,310.80" stroke="#8a8a8a" stroke-width="0.9"/><path d="M179.10,318.95 L182.5,318.95" stroke="#8a8a8a" stroke-width="0.9"/><path d="M179.10,327.10 L182.5,327.10" stroke="#8a8a8a" stroke-width="0.9"/><path d="M179.10,335.25 L182.5,335.25" stroke="#8a8a8a" stroke-width="0.9"/><path d="M179.10,343.40 L182.5,343.40" stroke="#8a8a8a" stroke-width="0.9"/><path d="M179.10,351.55 L182.5,351.55" stroke="#8a8a8a" stroke-width="0.9"/><path d="M179.10,359.70 L182.5,359.70" stroke="#8a8a8a" stroke-width="0.9"/><path d="M179.10,367.85 L182.5,367.85" stroke="#8a8a8a" stroke-width="0.9"/><path d="M179.10,376.00 L182.5,376.00" stroke="#8a8a8a" stroke-width="0.9"/><path d="M174.80,384.15 L182.5,384.15" stroke="#8a8a8a" stroke-width="0.9"/></svg>
<div class="t" style="left:181.17px;top:64.1px;width:60px;text-align:center;font-size:6.8px;color:#f0f0f0;transform:scaleX(0.83)">400m</div>
<div class="t" style="left:261.50px;top:62px;width:60px;text-align:center;font-size:9px;color:#f4ac00;font-weight:bold;transform:scaleX(0.88)">500m</div>
<div class="t" style="left:341.83px;top:64.1px;width:60px;text-align:center;font-size:6.8px;color:#f0f0f0;transform:scaleX(0.83)">600m</div>
<div class="t" style="left:422.16px;top:64.1px;width:60px;text-align:center;font-size:6.8px;color:#f0f0f0;transform:scaleX(0.83)">700m</div>
<div class="t" style="left:502.49px;top:64.1px;width:60px;text-align:center;font-size:6.8px;color:#f0f0f0;transform:scaleX(0.83)">800m</div>
<div class="t" style="left:582.82px;top:64.1px;width:60px;text-align:center;font-size:6.8px;color:#f0f0f0;transform:scaleX(0.83)">900m</div>
<div class="t" style="left:663.15px;top:62px;width:60px;text-align:center;font-size:9px;color:#f4ac00;font-weight:bold;transform:scaleX(0.88)">1km</div>
<div class="t" style="left:743.48px;top:64.1px;width:60px;text-align:center;font-size:6.8px;color:#f0f0f0;transform:scaleX(0.83)">1.1km</div>
<div class="t" style="left:823.81px;top:64.1px;width:60px;text-align:center;font-size:6.8px;color:#f0f0f0;transform:scaleX(0.83)">1.2km</div>
<div class="t" style="left:904.14px;top:64.1px;width:60px;text-align:center;font-size:6.8px;color:#f0f0f0;transform:scaleX(0.83)">1.3km</div>
<div class="t" style="left:984.47px;top:64.1px;width:60px;text-align:center;font-size:6.8px;color:#f0f0f0;transform:scaleX(0.83)">1.4km</div>
<div class="t" style="left:140.50px;top:135.75px;width:60px;text-align:center;font-size:6.8px;color:#f0f0f0;font-weight:normal;transform:rotate(-90deg) scaleX(1.0)">20m</div>
<div class="t" style="left:139.80px;top:215.65px;width:60px;text-align:center;font-size:10px;color:#f4ac00;font-weight:bold;transform:rotate(-90deg) scaleX(0.83)">0m</div>
<div class="t" style="left:140.50px;top:298.75px;width:60px;text-align:center;font-size:6.8px;color:#f0f0f0;font-weight:normal;transform:rotate(-90deg) scaleX(1.0)">-20m</div>
<div class="t" style="left:140.50px;top:380.25px;width:60px;text-align:center;font-size:6.8px;color:#f0f0f0;font-weight:normal;transform:rotate(-90deg) scaleX(1.0)">-40m</div>
<svg width="1024" height="555"><defs><clipPath id="cvclip"><rect x="164" y="60.3" width="851" height="325.7"/></clipPath></defs><g clip-path="url(#cvclip)"><path d="M247.50,207.37 L247.50,386" stroke="#3a3a3a" stroke-width="0.9"/><path d="M279.63,185.65 L279.63,386" stroke="#3a3a3a" stroke-width="0.9"/><path d="M315.98,191.59 L315.98,386" stroke="#3a3a3a" stroke-width="0.9"/><path d="M348.11,212.68 L348.11,386" stroke="#3a3a3a" stroke-width="0.9"/><path d="M388.28,238.94 L388.28,386" stroke="#3a3a3a" stroke-width="0.9"/><path d="M457.76,254.39 L457.76,386" stroke="#3a3a3a" stroke-width="0.9"/><path d="M487.43,255.42 L487.43,386" stroke="#3a3a3a" stroke-width="0.9"/><path d="M517.11,260.23 L517.11,386" stroke="#3a3a3a" stroke-width="0.9"/><path d="M557.28,280.59 L557.28,386" stroke="#3a3a3a" stroke-width="0.9"/><path d="M589.41,319.23 L589.41,386" stroke="#3a3a3a" stroke-width="0.9"/><path d="M615.40,342.14 L615.40,386" stroke="#3a3a3a" stroke-width="0.9"/><path d="M651.15,315.80 L651.15,386" stroke="#3a3a3a" stroke-width="0.9"/><path d="M678.55,278.32 L678.55,386" stroke="#3a3a3a" stroke-width="0.9"/><path d="M706.26,234.56 L706.26,386" stroke="#3a3a3a" stroke-width="0.9"/><path d="M738.81,195.38 L738.81,386" stroke="#3a3a3a" stroke-width="0.9"/><path d="M772.42,193.27 L772.42,386" stroke="#3a3a3a" stroke-width="0.9"/><path d="M806.03,217.97 L806.03,386" stroke="#3a3a3a" stroke-width="0.9"/><path d="M844.44,181.79 L844.44,386" stroke="#3a3a3a" stroke-width="0.9"/><path d="M880.56,71.62 L880.56,386" stroke="#3a3a3a" stroke-width="0.9"/><path d="M909.42,62.00 L909.42,386" stroke="#3a3a3a" stroke-width="0.9"/><path d="M951.19,62.00 L951.19,386" stroke="#3a3a3a" stroke-width="0.9"/><path d="M980.43,62.00 L980.43,386" stroke="#3a3a3a" stroke-width="0.9"/><path d="M1009.66,62.00 L1009.66,386" stroke="#3a3a3a" stroke-width="0.9"/><path d="M359.90,221.29 L359.90,368.10 M359.90,384.5 L359.90,386" stroke="#104040" stroke-width="0.9"/><path d="M417.79,254.32 L417.79,368.10 M417.79,384.5 L417.79,386" stroke="#104040" stroke-width="0.9"/><path d="M467.19,253.62 L467.19,368.10 M467.19,384.5 L467.19,386" stroke="#104040" stroke-width="0.9"/><path d="M578.42,305.40 L578.42,368.10 M578.42,384.5 L578.42,386" stroke="#104040" stroke-width="0.9"/><path d="M658.75,306.35 L658.75,368.10 M658.75,384.5 L658.75,386" stroke="#104040" stroke-width="0.9"/><path d="M694.06,254.81 L694.06,365.20 M694.06,384.5 L694.06,386" stroke="#104040" stroke-width="0.9"/><path d="M715.50,220.74 L715.50,365.20 M715.50,384.5 L715.50,386" stroke="#104040" stroke-width="0.9"/><path d="M164.5,221.25 L359.6,221.25 M715.1,221.25 L1015,221.25" stroke="#8c8cc0" stroke-width="0.8"/><path d="M359.6,221.2 L524.5,221.2 M549.5,221.2 L715.1,221.2" stroke="#0000b0" stroke-width="1.2"/><path d="M359.6,212.8 L359.6,221.5 M715.1,212.8 L715.1,221.5" stroke="#0000b0" stroke-width="1"/><path d="M417.4,254.4 L694.4,254.4" stroke="#0000b0" stroke-width="1.2"/><path d="M578.5,305.5 L657.6,305.5" stroke="#0000b0" stroke-width="1.2"/><path d="M271.89,188.27 L279.29,188.27" stroke="#8e8818" stroke-width="0.9"/><path d="M261.40,193.60 L268.80,193.60" stroke="#8e8818" stroke-width="0.9"/><path d="M256.25,198.93 L263.65,198.93" stroke="#8e8818" stroke-width="0.9"/><path d="M251.10,204.26 L258.50,204.26" stroke="#8e8818" stroke-width="0.9"/><path d="M246.52,209.59 L253.92,209.59" stroke="#8e8818" stroke-width="0.9"/><path d="M243.70,214.92 L251.10,214.92" stroke="#8e8818" stroke-width="0.9"/><path d="M240.88,220.25 L248.28,220.25" stroke="#8e8818" stroke-width="0.9"/><path d="M238.06,225.58 L245.46,225.58" stroke="#8e8818" stroke-width="0.9"/><path d="M235.24,230.91 L242.64,230.91" stroke="#8e8818" stroke-width="0.9"/><path d="M232.42,236.24 L239.82,236.24" stroke="#8e8818" stroke-width="0.9"/><path d="M229.62,241.57 L237.02,241.57" stroke="#8e8818" stroke-width="0.9"/><path d="M226.81,246.90 L234.21,246.90" stroke="#8e8818" stroke-width="0.9"/><path d="M224.01,252.23 L231.41,252.23" stroke="#8e8818" stroke-width="0.9"/><path d="M220.52,257.56 L227.92,257.56" stroke="#8e8818" stroke-width="0.9"/><path d="M216.92,262.89 L224.32,262.89" stroke="#8e8818" stroke-width="0.9"/><path d="M213.33,268.22 L220.73,268.22" stroke="#8e8818" stroke-width="0.9"/><path d="M209.73,273.55 L217.13,273.55" stroke="#8e8818" stroke-width="0.9"/><path d="M205.62,278.88 L213.02,278.88" stroke="#8e8818" stroke-width="0.9"/><path d="M200.56,284.21 L207.96,284.21" stroke="#8e8818" stroke-width="0.9"/><path d="M191.85,289.54 L199.25,289.54" stroke="#8e8818" stroke-width="0.9"/><path d="M271.89,188.27 L279.29,188.27" stroke="#8e8818" stroke-width="0.9"/><path d="M305.29,188.27 L312.69,188.27" stroke="#8e8818" stroke-width="0.9"/><path d="M319.69,193.60 L327.09,193.60" stroke="#8e8818" stroke-width="0.9"/><path d="M327.92,198.93 L335.32,198.93" stroke="#8e8818" stroke-width="0.9"/><path d="M336.05,204.26 L343.45,204.26" stroke="#8e8818" stroke-width="0.9"/><path d="M344.07,209.59 L351.47,209.59" stroke="#8e8818" stroke-width="0.9"/><path d="M351.85,214.92 L359.25,214.92" stroke="#8e8818" stroke-width="0.9"/><path d="M359.10,220.25 L366.50,220.25" stroke="#8e8818" stroke-width="0.9"/><path d="M743.36,193.60 L750.76,193.60" stroke="#8e8818" stroke-width="0.9"/><path d="M735.68,198.93 L743.08,198.93" stroke="#8e8818" stroke-width="0.9"/><path d="M730.07,204.26 L737.47,204.26" stroke="#8e8818" stroke-width="0.9"/><path d="M724.46,209.59 L731.86,209.59" stroke="#8e8818" stroke-width="0.9"/><path d="M720.29,214.92 L727.69,214.92" stroke="#8e8818" stroke-width="0.9"/><path d="M716.46,220.25 L723.86,220.25" stroke="#8e8818" stroke-width="0.9"/><path d="M773.76,193.60 L781.16,193.60" stroke="#8e8818" stroke-width="0.9"/><path d="M784.03,198.93 L791.43,198.93" stroke="#8e8818" stroke-width="0.9"/><path d="M791.14,204.26 L798.54,204.26" stroke="#8e8818" stroke-width="0.9"/><path d="M796.68,209.59 L804.08,209.59" stroke="#8e8818" stroke-width="0.9"/><path d="M802.90,214.92 L810.30,214.92" stroke="#8e8818" stroke-width="0.9"/><path d="M884.82,60.35 L892.22,60.35" stroke="#8e8818" stroke-width="0.9"/><path d="M883.09,65.68 L890.49,65.68" stroke="#8e8818" stroke-width="0.9"/><path d="M881.35,71.01 L888.75,71.01" stroke="#8e8818" stroke-width="0.9"/><path d="M879.62,76.34 L887.02,76.34" stroke="#8e8818" stroke-width="0.9"/><path d="M878.01,81.67 L885.41,81.67" stroke="#8e8818" stroke-width="0.9"/><path d="M876.41,87.00 L883.81,87.00" stroke="#8e8818" stroke-width="0.9"/><path d="M874.81,92.33 L882.21,92.33" stroke="#8e8818" stroke-width="0.9"/><path d="M873.21,97.66 L880.61,97.66" stroke="#8e8818" stroke-width="0.9"/><path d="M871.60,102.99 L879.00,102.99" stroke="#8e8818" stroke-width="0.9"/><path d="M870.00,108.32 L877.40,108.32" stroke="#8e8818" stroke-width="0.9"/><path d="M868.40,113.65 L875.80,113.65" stroke="#8e8818" stroke-width="0.9"/><path d="M866.74,118.98 L874.14,118.98" stroke="#8e8818" stroke-width="0.9"/><path d="M865.07,124.31 L872.47,124.31" stroke="#8e8818" stroke-width="0.9"/><path d="M863.40,129.64 L870.80,129.64" stroke="#8e8818" stroke-width="0.9"/><path d="M861.72,134.97 L869.12,134.97" stroke="#8e8818" stroke-width="0.9"/><path d="M860.05,140.30 L867.45,140.30" stroke="#8e8818" stroke-width="0.9"/><path d="M858.37,145.63 L865.77,145.63" stroke="#8e8818" stroke-width="0.9"/><path d="M856.70,150.96 L864.10,150.96" stroke="#8e8818" stroke-width="0.9"/><path d="M855.02,156.29 L862.42,156.29" stroke="#8e8818" stroke-width="0.9"/><path d="M852.99,161.62 L860.39,161.62" stroke="#8e8818" stroke-width="0.9"/><path d="M850.90,166.95 L858.30,166.95" stroke="#8e8818" stroke-width="0.9"/><path d="M848.81,172.28 L856.21,172.28" stroke="#8e8818" stroke-width="0.9"/><path d="M846.72,177.61 L854.12,177.61" stroke="#8e8818" stroke-width="0.9"/><path d="M844.42,182.94 L851.82,182.94" stroke="#8e8818" stroke-width="0.9"/><path d="M841.53,188.27 L848.93,188.27" stroke="#8e8818" stroke-width="0.9"/><path d="M838.65,193.60 L846.05,193.60" stroke="#8e8818" stroke-width="0.9"/><path d="M835.76,198.93 L843.16,198.93" stroke="#8e8818" stroke-width="0.9"/><path d="M832.87,204.26 L840.27,204.26" stroke="#8e8818" stroke-width="0.9"/><path d="M829.99,209.59 L837.39,209.59" stroke="#8e8818" stroke-width="0.9"/><path d="M825.41,214.92 L832.81,214.92" stroke="#8e8818" stroke-width="0.9"/><path d="M698.00,230.40 L708.40,230.40" stroke="#8a8a8a" stroke-width="0.9"/><path d="M693.00,230.40 L699.00,228.20 L699.00,232.60 Z" fill="#8a8a8a"/><path d="M692.30,239.70 L702.00,239.70" stroke="#8a8a8a" stroke-width="0.9"/><path d="M687.30,239.70 L693.30,237.50 L693.30,241.90 Z" fill="#8a8a8a"/><path d="M677.00,263.50 L687.50,263.50" stroke="#8a8a8a" stroke-width="0.9"/><path d="M672.00,263.50 L678.00,261.30 L678.00,265.70 Z" fill="#8a8a8a"/><path d="M671.00,272.90 L680.50,272.90" stroke="#8a8a8a" stroke-width="0.9"/><path d="M666.00,272.90 L672.00,270.70 L672.00,275.10 Z" fill="#8a8a8a"/><path d="M664.50,282.20 L674.00,282.20" stroke="#8a8a8a" stroke-width="0.9"/><path d="M659.50,282.20 L665.50,280.00 L665.50,284.40 Z" fill="#8a8a8a"/><path d="M657.50,291.60 L667.00,291.60" stroke="#8a8a8a" stroke-width="0.9"/><path d="M652.50,291.60 L658.50,289.40 L658.50,293.80 Z" fill="#8a8a8a"/><polyline points="165.9,292.9 172.5,292.9 182,292.6 190.8,289.8 199.3,284.9 206.8,277 223,253 231,237.8 246.6,208.3 263.5,190.8 279.2,185.7 284.3,185.1 289.7,185.4 299.7,186.8 316,191.6 331.9,201.9 348,212.6 355.7,218.1 359.6,221.1 371.7,228.8 388.2,238.9 401.5,246.5 417.4,254.2 425.6,256.7 435,258.7 441.6,257.2 457.6,254.4 467,253.6 473.8,254.4 487.3,255.4 494.1,256.2 501.2,257.5 517,260.2 533,264 541.3,267.8 557.2,280.5 573.1,299 578.5,305.5 589.3,319.1 599.5,331 607.2,338.4 615.2,342.1 620.4,343.1 626.9,341.4 635.1,335.1 650.9,316.1 657.6,308.1 662.6,300.5 678.5,278.4 694.4,254.3 698.3,247.4 706.3,234.5 715.1,221.3 722.8,210.6 739,195.2 748.4,191.2 757.3,190.2 764.3,190.7 772.5,193.3 780.2,196.8 788.4,202.2 796.4,209.9 805.8,217.9 814,220.5 822.2,217.4 828.3,211.6 844.6,181.5 854.2,157 867.3,115.3 879,76.4 884.5,59.5" fill="none" stroke="#f2f2f2" stroke-width="1"/><circle cx="165.9" cy="292.9" r="1" fill="#fff"/><path d="M172.5,291.0 L174.4,292.9 L172.5,294.79999999999995 L170.6,292.9 Z" fill="#fff"/><circle cx="182" cy="292.6" r="1" fill="#fff"/><circle cx="190.8" cy="289.8" r="1" fill="#fff"/><path d="M199.3,283.0 L201.20000000000002,284.9 L199.3,286.79999999999995 L197.4,284.9 Z" fill="#fff"/><circle cx="206.8" cy="277" r="1" fill="#fff"/><circle cx="223" cy="253" r="1" fill="#fff"/><circle cx="231" cy="237.8" r="1" fill="#fff"/><circle cx="246.6" cy="208.3" r="1" fill="#fff"/><circle cx="263.5" cy="190.8" r="1" fill="#fff"/><circle cx="279.2" cy="185.7" r="1" fill="#fff"/><path d="M284.3,183.2 L286.2,185.1 L284.3,187.0 L282.40000000000003,185.1 Z" fill="#fff"/><circle cx="289.7" cy="185.4" r="1" fill="#fff"/><circle cx="299.7" cy="186.8" r="1" fill="#fff"/><circle cx="316" cy="191.6" r="1" fill="#fff"/><circle cx="331.9" cy="201.9" r="1" fill="#fff"/><circle cx="348" cy="212.6" r="1" fill="#fff"/><circle cx="355.7" cy="218.1" r="1" fill="#fff"/><circle cx="359.6" cy="221.1" r="1" fill="#fff"/><circle cx="371.7" cy="228.8" r="1" fill="#fff"/><circle cx="388.2" cy="238.9" r="1" fill="#fff"/><circle cx="401.5" cy="246.5" r="1" fill="#fff"/><circle cx="417.4" cy="254.2" r="1" fill="#fff"/><path d="M425.6,254.79999999999998 L427.5,256.7 L425.6,258.59999999999997 L423.70000000000005,256.7 Z" fill="#fff"/><path d="M435,256.8 L436.9,258.7 L435,260.59999999999997 L433.1,258.7 Z" fill="#fff"/><circle cx="441.6" cy="257.2" r="1" fill="#fff"/><circle cx="457.6" cy="254.4" r="1" fill="#fff"/><path d="M467,251.7 L468.9,253.6 L467,255.5 L465.1,253.6 Z" fill="#fff"/><circle cx="473.8" cy="254.4" r="1" fill="#fff"/><circle cx="487.3" cy="255.4" r="1" fill="#fff"/><path d="M494.1,254.29999999999998 L496.0,256.2 L494.1,258.09999999999997 L492.20000000000005,256.2 Z" fill="#fff"/><circle cx="501.2" cy="257.5" r="1" fill="#fff"/><circle cx="517" cy="260.2" r="1" fill="#fff"/><circle cx="533" cy="264" r="1" fill="#fff"/><circle cx="541.3" cy="267.8" r="1" fill="#fff"/><circle cx="557.2" cy="280.5" r="1" fill="#fff"/><circle cx="573.1" cy="299" r="1" fill="#fff"/><circle cx="578.5" cy="305.5" r="1" fill="#fff"/><circle cx="589.3" cy="319.1" r="1" fill="#fff"/><circle cx="599.5" cy="331" r="1" fill="#fff"/><path d="M607.2,336.5 L609.1,338.4 L607.2,340.29999999999995 L605.3000000000001,338.4 Z" fill="#fff"/><circle cx="615.2" cy="342.1" r="1" fill="#fff"/><path d="M620.4,341.20000000000005 L622.3,343.1 L620.4,345.0 L618.5,343.1 Z" fill="#fff"/><path d="M626.9,339.5 L628.8,341.4 L626.9,343.29999999999995 L625.0,341.4 Z" fill="#fff"/><circle cx="635.1" cy="335.1" r="1" fill="#fff"/><circle cx="650.9" cy="316.1" r="1" fill="#fff"/><circle cx="657.6" cy="308.1" r="1" fill="#fff"/><circle cx="662.6" cy="300.5" r="1" fill="#fff"/><circle cx="678.5" cy="278.4" r="1" fill="#fff"/><circle cx="694.4" cy="254.3" r="1" fill="#fff"/><circle cx="698.3" cy="247.4" r="1" fill="#fff"/><path d="M706.3,232.6 L708.1999999999999,234.5 L706.3,236.4 L704.4,234.5 Z" fill="#fff"/><circle cx="715.1" cy="221.3" r="1" fill="#fff"/><circle cx="722.8" cy="210.6" r="1" fill="#fff"/><circle cx="739" cy="195.2" r="1" fill="#fff"/><circle cx="748.4" cy="191.2" r="1" fill="#fff"/><path d="M757.3,188.29999999999998 L759.1999999999999,190.2 L757.3,192.1 L755.4,190.2 Z" fill="#fff"/><circle cx="764.3" cy="190.7" r="1" fill="#fff"/><circle cx="772.5" cy="193.3" r="1" fill="#fff"/><circle cx="780.2" cy="196.8" r="1" fill="#fff"/><path d="M788.4,200.29999999999998 L790.3,202.2 L788.4,204.1 L786.5,202.2 Z" fill="#fff"/><circle cx="796.4" cy="209.9" r="1" fill="#fff"/><circle cx="805.8" cy="217.9" r="1" fill="#fff"/><path d="M814,218.6 L815.9,220.5 L814,222.4 L812.1,220.5 Z" fill="#fff"/><circle cx="822.2" cy="217.4" r="1" fill="#fff"/><circle cx="828.3" cy="211.6" r="1" fill="#fff"/><circle cx="844.6" cy="181.5" r="1" fill="#fff"/><circle cx="854.2" cy="157" r="1" fill="#fff"/><circle cx="867.3" cy="115.3" r="1" fill="#fff"/><circle cx="879" cy="76.4" r="1" fill="#fff"/><circle cx="884.5" cy="59.5" r="1" fill="#fff"/></g></svg>
<div class="t" style="left:510px;top:218.2px;width:55px;text-align:center;font-size:6.8px;color:#2828ff;transform:scaleX(0.83)">442.68m</div>
<div class="t" style="left:517px;top:238px;width:60px;text-align:center;font-size:6.8px;color:#c8bc00;transform:scaleX(0.8)">2411.78 (km*m3)</div>
<div class="t" style="left:584.6px;top:268.2px;width:60px;text-align:center;font-size:6.8px;color:#c8bc00;transform:scaleX(0.8)">734.15 (km*m3)</div>
<div class="t" style="left:329.90px;top:372.20px;width:60px;text-align:center;font-size:6.6px;color:#a8a8a8;transform:rotate(-90deg) scaleX(0.83)">585.14</div>
<div class="t" style="left:387.79px;top:372.20px;width:60px;text-align:center;font-size:6.6px;color:#a8a8a8;transform:rotate(-90deg) scaleX(0.83)">657.21</div>
<div class="t" style="left:437.19px;top:372.20px;width:60px;text-align:center;font-size:6.6px;color:#a8a8a8;transform:rotate(-90deg) scaleX(0.83)">718.71</div>
<div class="t" style="left:548.42px;top:372.20px;width:60px;text-align:center;font-size:6.6px;color:#a8a8a8;transform:rotate(-90deg) scaleX(0.83)">857.17</div>
<div class="t" style="left:628.75px;top:372.20px;width:60px;text-align:center;font-size:6.6px;color:#a8a8a8;transform:rotate(-90deg) scaleX(0.83)">957.17</div>
<div class="t" style="left:664.06px;top:370.75px;width:60px;text-align:center;font-size:6.6px;color:#a8a8a8;transform:rotate(-90deg) scaleX(0.83)">1001.13</div>
<div class="t" style="left:685.50px;top:370.75px;width:60px;text-align:center;font-size:6.6px;color:#a8a8a8;transform:rotate(-90deg) scaleX(0.83)">1027.82</div>
<div style="position:absolute;left:1015px;top:60px;width:9px;height:335px;background:#000"></div>
<div style="position:absolute;left:1015.5px;top:69px;width:8.5px;height:110px;background:linear-gradient(90deg,#a4a4a4,#888 50%,#6c6c6c)"></div>
<div style="position:absolute;left:1015.5px;top:179px;width:8.5px;height:197.5px;background:linear-gradient(90deg,#e8e8e8,#c4c4c4 50%,#a8a8a8)"></div>
<div style="position:absolute;left:1015.2px;top:60.8px;width:8.8px;height:8.4px;background:#f5b800"></div>
<div style="position:absolute;left:1015.2px;top:377px;width:8.8px;height:8px;background:#f5b800"></div>
<svg width="1024" height="555"><path d="M1017.3,66.4 L1019.6,63.8 L1021.9,66.4" stroke="#111" stroke-width="1.1" fill="none"/><path d="M1017.3,379.8 L1019.6,382.3 L1021.9,379.8" stroke="#111" stroke-width="1.1" fill="none"/></svg>
<div style="position:absolute;left:163.5px;top:386px;width:851.5px;height:8.6px;background:#f0f0f0"></div>
<div style="position:absolute;left:164px;top:386px;width:851px;height:8.6px;background:linear-gradient(#a8a8a8,#8a8a8a 60%,#9a9a9a)"></div>
<div style="position:absolute;left:366px;top:386.3px;width:600px;height:8px;background:linear-gradient(#e8e8e8,#c8c8c8 55%,#b4b4b4)"></div>
<div style="position:absolute;left:164px;top:386.2px;width:8.5px;height:8.2px;background:#f5b800"></div>
<div style="position:absolute;left:1006.8px;top:386.2px;width:8px;height:8.2px;background:#f5b800"></div>
<svg width="1024" height="555"><path d="M169.7,388 L167.3,390.3 L169.7,392.6" stroke="#111" stroke-width="1.1" fill="none"/><path d="M1009.6,388 L1012,390.3 L1009.6,392.6" stroke="#111" stroke-width="1.1" fill="none"/></svg>
<div style="position:absolute;left:163.5px;top:394.35px;width:860.5px;height:96px;background:#000"></div>
<div style="position:absolute;left:164px;top:394.35px;width:55.7px;height:96px;background:#c08a12"></div>
<svg width="1024" height="555"><path d="M164,403.98 L1022.8,403.98" stroke="#c4c4c4" stroke-width="1"/><path d="M164,413.61 L1022.8,413.61" stroke="#c4c4c4" stroke-width="1"/><path d="M164,423.24 L1022.8,423.24" stroke="#c4c4c4" stroke-width="1"/><path d="M164,432.87 L1022.8,432.87" stroke="#c4c4c4" stroke-width="1"/><path d="M164,442.50 L1022.8,442.50" stroke="#c4c4c4" stroke-width="1"/><path d="M164,452.13 L1022.8,452.13" stroke="#c4c4c4" stroke-width="1"/><path d="M164,461.76 L1022.8,461.76" stroke="#c4c4c4" stroke-width="1"/><path d="M164,471.39 L1022.8,471.39" stroke="#c4c4c4" stroke-width="1"/><path d="M164,481.02 L1022.8,481.02" stroke="#c4c4c4" stroke-width="1"/><path d="M164,394.65 L1015,394.65" stroke="#e0e0e0" stroke-width="0.6"/></svg>
<div class="t" style="left:169px;top:395.35px;font-size:6.8px;color:#f8f4e8;transform:scaleX(0.86);transform-origin:0 0">Χιλιομ. θέση (m)</div>
<div class="t" style="left:169px;top:404.98px;font-size:6.8px;color:#f8f4e8;transform:scaleX(0.86);transform-origin:0 0">Όνομα διατομής</div>
<div class="t" style="left:169px;top:414.61px;font-size:6.8px;color:#f8f4e8;transform:scaleX(0.86);transform-origin:0 0">Απ. μεταξύ (m)</div>
<div class="t" style="left:169px;top:424.24px;font-size:6.8px;color:#f8f4e8;transform:scaleX(0.86);transform-origin:0 0">Εμβ. ορυγμάτων</div>
<div class="t" style="left:169px;top:433.87px;font-size:6.8px;color:#f8f4e8;transform:scaleX(0.86);transform-origin:0 0">Εμβ. επιχωμάτων</div>
<div class="t" style="left:169px;top:443.50px;font-size:6.8px;color:#f8f4e8;transform:scaleX(0.86);transform-origin:0 0">Διαφορά εμβ. (m2)</div>
<div class="t" style="left:169px;top:453.13px;font-size:6.8px;color:#f8f4e8;transform:scaleX(0.86);transform-origin:0 0">Ορύγματα (m3)</div>
<div class="t" style="left:169px;top:462.76px;font-size:6.8px;color:#f8f4e8;transform:scaleX(0.86);transform-origin:0 0">Επιχώματα (m3)</div>
<div class="t" style="left:169px;top:472.39px;font-size:6.8px;color:#f8f4e8;transform:scaleX(0.86);transform-origin:0 0">Διαφορά όγκων</div>
<div class="t" style="left:169px;top:482.02px;font-size:6.8px;color:#f8f4e8;transform:scaleX(0.86);transform-origin:0 0">Bruckner</div>
<div class="t" style="left:222.50px;top:396.05px;width:50px;text-align:center;font-size:6.8px;color:#f4f4f4;transform:scaleX(0.83)">445.22</div>
<div class="t" style="left:254.63px;top:396.05px;width:50px;text-align:center;font-size:6.8px;color:#f4f4f4;transform:scaleX(0.83)">485.22</div>
<div class="t" style="left:290.98px;top:396.05px;width:50px;text-align:center;font-size:6.8px;color:#f4f4f4;transform:scaleX(0.83)">530.47</div>
<div class="t" style="left:323.11px;top:396.05px;width:50px;text-align:center;font-size:6.8px;color:#f4f4f4;transform:scaleX(0.83)">570.47</div>
<div class="t" style="left:363.28px;top:396.05px;width:50px;text-align:center;font-size:6.8px;color:#f4f4f4;transform:scaleX(0.83)">620.47</div>
<div class="t" style="left:392.59px;top:396.05px;width:50px;text-align:center;font-size:6.8px;color:#f4f4f4;transform:scaleX(0.83)">656.96</div>
<div class="t" style="left:432.76px;top:396.05px;width:50px;text-align:center;font-size:6.8px;color:#f4f4f4;transform:scaleX(0.83)">706.96</div>
<div class="t" style="left:462.43px;top:396.05px;width:50px;text-align:center;font-size:6.8px;color:#f4f4f4;transform:scaleX(0.83)">743.90</div>
<div class="t" style="left:492.11px;top:396.05px;width:50px;text-align:center;font-size:6.8px;color:#f4f4f4;transform:scaleX(0.83)">780.85</div>
<div class="t" style="left:532.28px;top:396.05px;width:50px;text-align:center;font-size:6.8px;color:#f4f4f4;transform:scaleX(0.83)">830.85</div>
<div class="t" style="left:564.41px;top:396.05px;width:50px;text-align:center;font-size:6.8px;color:#f4f4f4;transform:scaleX(0.83)">870.85</div>
<div class="t" style="left:590.40px;top:396.05px;width:50px;text-align:center;font-size:6.8px;color:#f4f4f4;transform:scaleX(0.83)">903.21</div>
<div class="t" style="left:626.15px;top:396.05px;width:50px;text-align:center;font-size:6.8px;color:#f4f4f4;transform:scaleX(0.83)">947.71</div>
<div class="t" style="left:653.55px;top:396.05px;width:50px;text-align:center;font-size:6.8px;color:#f4f4f4;transform:scaleX(0.83)">981.82</div>
<div class="t" style="left:681.26px;top:396.05px;width:50px;text-align:center;font-size:6.8px;color:#f4f4f4;transform:scaleX(0.83)">1016.32</div>
<div class="t" style="left:713.81px;top:396.05px;width:50px;text-align:center;font-size:6.8px;color:#f4f4f4;transform:scaleX(0.83)">1056.84</div>
<div class="t" style="left:747.42px;top:396.05px;width:50px;text-align:center;font-size:6.8px;color:#f4f4f4;transform:scaleX(0.83)">1098.67</div>
<div class="t" style="left:781.03px;top:396.05px;width:50px;text-align:center;font-size:6.8px;color:#f4f4f4;transform:scaleX(0.83)">1140.51</div>
<div class="t" style="left:819.44px;top:396.05px;width:50px;text-align:center;font-size:6.8px;color:#f4f4f4;transform:scaleX(0.83)">1188.33</div>
<div class="t" style="left:855.56px;top:396.05px;width:50px;text-align:center;font-size:6.8px;color:#f4f4f4;transform:scaleX(0.83)">1233.29</div>
<div class="t" style="left:884.42px;top:396.05px;width:50px;text-align:center;font-size:6.8px;color:#f4f4f4;transform:scaleX(0.83)">1269.22</div>
<div class="t" style="left:926.19px;top:396.05px;width:50px;text-align:center;font-size:6.8px;color:#f4f4f4;transform:scaleX(0.83)">1321.22</div>
<div class="t" style="left:955.43px;top:396.05px;width:50px;text-align:center;font-size:6.8px;color:#f4f4f4;transform:scaleX(0.83)">1357.62</div>
<div class="t" style="left:984.66px;top:396.05px;width:50px;text-align:center;font-size:6.8px;color:#f4f4f4;transform:scaleX(0.83)">1394.01</div>
<div class="t" style="left:205.60px;top:404.98px;width:50px;text-align:center;font-size:6.8px;color:#f4f4f4;transform:scaleX(0.83)">Π3</div>
<div class="t" style="left:221.60px;top:404.98px;width:50px;text-align:center;font-size:6.8px;color:#f4f4f4;transform:scaleX(0.83)">18</div>
<div class="t" style="left:237.90px;top:404.98px;width:50px;text-align:center;font-size:6.8px;color:#f4f4f4;transform:scaleX(0.83)">19</div>
<div class="t" style="left:254.00px;top:404.98px;width:50px;text-align:center;font-size:6.8px;color:#f4f4f4;transform:scaleX(0.83)">20</div>
<div class="t" style="left:274.00px;top:404.98px;width:50px;text-align:center;font-size:6.8px;color:#f4f4f4;transform:scaleX(0.83)">21</div>
<div class="t" style="left:290.60px;top:404.98px;width:50px;text-align:center;font-size:6.8px;color:#f4f4f4;transform:scaleX(0.83)">22</div>
<div class="t" style="left:306.60px;top:404.98px;width:50px;text-align:center;font-size:6.8px;color:#f4f4f4;transform:scaleX(0.83)">23</div>
<div class="t" style="left:322.60px;top:404.98px;width:50px;text-align:center;font-size:6.8px;color:#f4f4f4;transform:scaleX(0.83)">Π'3</div>
<div class="t" style="left:346.30px;top:404.98px;width:50px;text-align:center;font-size:6.8px;color:#f4f4f4;transform:scaleX(0.83)">25</div>
<div class="t" style="left:362.90px;top:404.98px;width:50px;text-align:center;font-size:6.8px;color:#f4f4f4;transform:scaleX(0.83)">Α'3</div>
<div class="t" style="left:392.00px;top:404.98px;width:50px;text-align:center;font-size:6.8px;color:#f4f4f4;transform:scaleX(0.83)">26</div>
<div class="t" style="left:408.20px;top:404.98px;width:50px;text-align:center;font-size:6.8px;color:#f4f4f4;transform:scaleX(0.83)">27</div>
<div class="t" style="left:432.00px;top:404.98px;width:50px;text-align:center;font-size:6.8px;color:#f4f4f4;transform:scaleX(0.83)">28</div>
<div class="t" style="left:448.40px;top:404.98px;width:50px;text-align:center;font-size:6.8px;color:#f4f4f4;transform:scaleX(0.83)">29</div>
<div class="t" style="left:471.50px;top:404.98px;width:50px;text-align:center;font-size:6.8px;color:#f4f4f4;transform:scaleX(0.83)">Δ4'</div>
<div class="t" style="left:492.00px;top:404.98px;width:50px;text-align:center;font-size:6.8px;color:#f4f4f4;transform:scaleX(0.83)">31</div>
<div class="t" style="left:507.00px;top:404.98px;width:50px;text-align:center;font-size:6.8px;color:#f4f4f4;transform:scaleX(0.83)">Π4</div>
<div class="t" style="left:532.00px;top:404.98px;width:50px;text-align:center;font-size:6.8px;color:#f4f4f4;transform:scaleX(0.83)">33</div>
<div class="t" style="left:548.00px;top:404.98px;width:50px;text-align:center;font-size:6.8px;color:#f4f4f4;transform:scaleX(0.83)">Α'4</div>
<div class="t" style="left:564.00px;top:404.98px;width:50px;text-align:center;font-size:6.8px;color:#f4f4f4;transform:scaleX(0.83)">34</div>
<div class="t" style="left:582.00px;top:404.98px;width:50px;text-align:center;font-size:6.8px;color:#f4f4f4;transform:scaleX(0.83)">Α5'</div>
<div class="t" style="left:598.00px;top:404.98px;width:50px;text-align:center;font-size:6.8px;color:#f4f4f4;transform:scaleX(0.83)">Π5'</div>
<div class="t" style="left:625.80px;top:404.98px;width:50px;text-align:center;font-size:6.8px;color:#f4f4f4;transform:scaleX(0.83)">37</div>
<div class="t" style="left:654.00px;top:404.98px;width:50px;text-align:center;font-size:6.8px;color:#f4f4f4;transform:scaleX(0.83)">39</div>
<div class="t" style="left:669.00px;top:404.98px;width:50px;text-align:center;font-size:6.8px;color:#f4f4f4;transform:scaleX(0.83)">Π5</div>
<div class="t" style="left:689.00px;top:404.98px;width:50px;text-align:center;font-size:6.8px;color:#f4f4f4;transform:scaleX(0.83)">Α'5</div>
<div class="t" style="left:714.00px;top:404.98px;width:50px;text-align:center;font-size:6.8px;color:#f4f4f4;transform:scaleX(0.83)">41</div>
<div class="t" style="left:730.00px;top:404.98px;width:50px;text-align:center;font-size:6.8px;color:#f4f4f4;transform:scaleX(0.83)">Π6'</div>
<div class="t" style="left:754.00px;top:404.98px;width:50px;text-align:center;font-size:6.8px;color:#f4f4f4;transform:scaleX(0.83)">43</div>
<div class="t" style="left:771.00px;top:404.98px;width:50px;text-align:center;font-size:6.8px;color:#f4f4f4;transform:scaleX(0.83)">Π6</div>
<div class="t" style="left:788.00px;top:404.98px;width:50px;text-align:center;font-size:6.8px;color:#f4f4f4;transform:scaleX(0.83)">44'</div>
<div class="t" style="left:819.00px;top:404.98px;width:50px;text-align:center;font-size:6.8px;color:#f4f4f4;transform:scaleX(0.83)">45</div>
<div class="t" style="left:841.00px;top:404.98px;width:50px;text-align:center;font-size:6.8px;color:#f4f4f4;transform:scaleX(0.83)">Δ7</div>
<div class="t" style="left:864.50px;top:404.98px;width:50px;text-align:center;font-size:6.8px;color:#f4f4f4;transform:scaleX(0.83)">46</div>
<div class="t" style="left:881.60px;top:404.98px;width:50px;text-align:center;font-size:6.8px;color:#f4f4f4;transform:scaleX(0.83)">Α'7</div>
<div class="t" style="left:900.00px;top:404.98px;width:50px;text-align:center;font-size:6.8px;color:#f4f4f4;transform:scaleX(0.83)">47</div>
<div class="t" style="left:926.00px;top:404.98px;width:50px;text-align:center;font-size:6.8px;color:#f4f4f4;transform:scaleX(0.83)">48</div>
<div class="t" style="left:941.60px;top:404.98px;width:50px;text-align:center;font-size:6.8px;color:#f4f4f4;transform:scaleX(0.83)">49</div>
<div class="t" style="left:968.00px;top:404.98px;width:50px;text-align:center;font-size:6.8px;color:#f4f4f4;transform:scaleX(0.83)">50</div>
<div class="t" style="left:983.00px;top:404.98px;width:50px;text-align:center;font-size:6.8px;color:#f4f4f4;transform:scaleX(0.83)">51</div>
<div class="t" style="left:221.60px;top:424.24px;width:50px;text-align:center;font-size:6.8px;color:#f4f4f4;transform:scaleX(0.83)">312.00</div>
<div class="t" style="left:254.00px;top:424.24px;width:50px;text-align:center;font-size:6.8px;color:#f4f4f4;transform:scaleX(0.83)">8.11</div>
<div class="t" style="left:274.50px;top:424.24px;width:50px;text-align:center;font-size:6.8px;color:#f4f4f4;transform:scaleX(0.83)">0.00</div>
<div class="t" style="left:306.50px;top:424.24px;width:50px;text-align:center;font-size:6.8px;color:#f4f4f4;transform:scaleX(0.83)">0.00</div>
<div class="t" style="left:330.00px;top:424.24px;width:50px;text-align:center;font-size:6.8px;color:#f4f4f4;transform:scaleX(0.83)">0.00</div>
<div class="t" style="left:362.70px;top:424.24px;width:50px;text-align:center;font-size:6.8px;color:#f4f4f4;transform:scaleX(0.83)">0.00</div>
<div class="t" style="left:392.00px;top:424.24px;width:50px;text-align:center;font-size:6.8px;color:#f4f4f4;transform:scaleX(0.83)">0.00</div>
<div class="t" style="left:416.00px;top:424.24px;width:50px;text-align:center;font-size:6.8px;color:#f4f4f4;transform:scaleX(0.83)">75.96</div>
<div class="t" style="left:441.60px;top:424.24px;width:50px;text-align:center;font-size:6.8px;color:#f4f4f4;transform:scaleX(0.83)">14.05</div>
<div class="t" style="left:469.00px;top:424.24px;width:50px;text-align:center;font-size:6.8px;color:#f4f4f4;transform:scaleX(0.83)">0.00</div>
<div class="t" style="left:491.80px;top:424.24px;width:50px;text-align:center;font-size:6.8px;color:#f4f4f4;transform:scaleX(0.83)">0.00</div>
<div class="t" style="left:515.60px;top:424.24px;width:50px;text-align:center;font-size:6.8px;color:#f4f4f4;transform:scaleX(0.83)">0.00</div>
<div class="t" style="left:547.50px;top:424.24px;width:50px;text-align:center;font-size:6.8px;color:#f4f4f4;transform:scaleX(0.83)">0.00</div>
<div class="t" style="left:574.00px;top:424.24px;width:50px;text-align:center;font-size:6.8px;color:#f4f4f4;transform:scaleX(0.83)">0.00</div>
<div class="t" style="left:593.60px;top:424.24px;width:50px;text-align:center;font-size:6.8px;color:#f4f4f4;transform:scaleX(0.83)">9.57</div>
<div class="t" style="left:625.70px;top:424.24px;width:50px;text-align:center;font-size:6.8px;color:#f4f4f4;transform:scaleX(0.83)">284.36</div>
<div class="t" style="left:653.00px;top:424.24px;width:50px;text-align:center;font-size:6.8px;color:#f4f4f4;transform:scaleX(0.83)">283.54</div>
<div class="t" style="left:682.00px;top:424.24px;width:50px;text-align:center;font-size:6.8px;color:#f4f4f4;transform:scaleX(0.83)">308.25</div>
<div class="t" style="left:714.00px;top:424.24px;width:50px;text-align:center;font-size:6.8px;color:#f4f4f4;transform:scaleX(0.83)">182.13</div>
<div class="t" style="left:735.00px;top:424.24px;width:50px;text-align:center;font-size:6.8px;color:#f4f4f4;transform:scaleX(0.83)">41.97</div>
<div class="t" style="left:763.00px;top:424.24px;width:50px;text-align:center;font-size:6.8px;color:#f4f4f4;transform:scaleX(0.83)">0.00</div>
<div class="t" style="left:788.70px;top:424.24px;width:50px;text-align:center;font-size:6.8px;color:#f4f4f4;transform:scaleX(0.83)">0.00</div>
<div class="t" style="left:819.00px;top:424.24px;width:50px;text-align:center;font-size:6.8px;color:#f4f4f4;transform:scaleX(0.83)">478.92</div>
<div class="t" style="left:855.00px;top:424.24px;width:50px;text-align:center;font-size:6.8px;color:#f4f4f4;transform:scaleX(0.83)">666.93</div>
<div class="t" style="left:881.00px;top:424.24px;width:50px;text-align:center;font-size:6.8px;color:#f4f4f4;transform:scaleX(0.83)">299.49</div>
<div class="t" style="left:904.00px;top:424.24px;width:50px;text-align:center;font-size:6.8px;color:#f4f4f4;transform:scaleX(0.83)">0.00</div>
<div class="t" style="left:925.00px;top:424.24px;width:50px;text-align:center;font-size:6.8px;color:#f4f4f4;transform:scaleX(0.83)">0.00</div>
<div class="t" style="left:947.60px;top:424.24px;width:50px;text-align:center;font-size:6.8px;color:#f4f4f4;transform:scaleX(0.83)">52.39</div>
<div class="t" style="left:984.40px;top:424.24px;width:50px;text-align:center;font-size:6.8px;color:#f4f4f4;transform:scaleX(0.83)">456.35</div>
<div class="t" style="left:221.60px;top:433.87px;width:50px;text-align:center;font-size:6.8px;color:#f4f4f4;transform:scaleX(0.83)">0.00</div>
<div class="t" style="left:254.00px;top:433.87px;width:50px;text-align:center;font-size:6.8px;color:#f4f4f4;transform:scaleX(0.83)">0.00</div>
<div class="t" style="left:290.60px;top:433.87px;width:50px;text-align:center;font-size:6.8px;color:#f4f4f4;transform:scaleX(0.83)">95.78</div>
<div class="t" style="left:322.60px;top:433.87px;width:50px;text-align:center;font-size:6.8px;color:#f4f4f4;transform:scaleX(0.83)">135.31</div>
<div class="t" style="left:362.70px;top:433.87px;width:50px;text-align:center;font-size:6.8px;color:#f4f4f4;transform:scaleX(0.83)">118.82</div>
<div class="t" style="left:392.00px;top:433.87px;width:50px;text-align:center;font-size:6.8px;color:#f4f4f4;transform:scaleX(0.83)">77.56</div>
<div class="t" style="left:416.00px;top:433.87px;width:50px;text-align:center;font-size:6.8px;color:#f4f4f4;transform:scaleX(0.83)">22.06</div>
<div class="t" style="left:441.60px;top:433.87px;width:50px;text-align:center;font-size:6.8px;color:#f4f4f4;transform:scaleX(0.83)">14.05</div>
<div class="t" style="left:469.00px;top:433.87px;width:50px;text-align:center;font-size:6.8px;color:#f4f4f4;transform:scaleX(0.83)">23.25</div>
<div class="t" style="left:491.80px;top:433.87px;width:50px;text-align:center;font-size:6.8px;color:#f4f4f4;transform:scaleX(0.83)">38.18</div>
<div class="t" style="left:516.00px;top:433.87px;width:50px;text-align:center;font-size:6.8px;color:#f4f4f4;transform:scaleX(0.83)">103.85</div>
<div class="t" style="left:547.50px;top:433.87px;width:50px;text-align:center;font-size:6.8px;color:#f4f4f4;transform:scaleX(0.83)">252.31</div>
<div class="t" style="left:574.00px;top:433.87px;width:50px;text-align:center;font-size:6.8px;color:#f4f4f4;transform:scaleX(0.83)">225.70</div>
<div class="t" style="left:602.00px;top:433.87px;width:50px;text-align:center;font-size:6.8px;color:#f4f4f4;transform:scaleX(0.83)">0.00</div>
<div class="t" style="left:625.60px;top:433.87px;width:50px;text-align:center;font-size:6.8px;color:#f4f4f4;transform:scaleX(0.83)">0.00</div>
<div class="t" style="left:653.00px;top:433.87px;width:50px;text-align:center;font-size:6.8px;color:#f4f4f4;transform:scaleX(0.83)">0.00</div>
<div class="t" style="left:673.50px;top:433.87px;width:50px;text-align:center;font-size:6.8px;color:#f4f4f4;transform:scaleX(0.83)">0.00</div>
<div class="t" style="left:697.00px;top:433.87px;width:50px;text-align:center;font-size:6.8px;color:#f4f4f4;transform:scaleX(0.83)">29.06</div>
<div class="t" style="left:723.40px;top:433.87px;width:50px;text-align:center;font-size:6.8px;color:#f4f4f4;transform:scaleX(0.83)">73.91</div>
<div class="t" style="left:746.00px;top:433.87px;width:50px;text-align:center;font-size:6.8px;color:#f4f4f4;transform:scaleX(0.83)">91.95</div>
<div class="t" style="left:771.70px;top:433.87px;width:50px;text-align:center;font-size:6.8px;color:#f4f4f4;transform:scaleX(0.83)">225.46</div>
<div class="t" style="left:789.00px;top:433.87px;width:50px;text-align:center;font-size:6.8px;color:#f4f4f4;transform:scaleX(0.83)">0.00</div>
<div class="t" style="left:819.00px;top:433.87px;width:50px;text-align:center;font-size:6.8px;color:#f4f4f4;transform:scaleX(0.83)">0.00</div>
<div class="t" style="left:841.00px;top:433.87px;width:50px;text-align:center;font-size:6.8px;color:#f4f4f4;transform:scaleX(0.83)">0.00</div>
<div class="t" style="left:865.00px;top:433.87px;width:50px;text-align:center;font-size:6.8px;color:#f4f4f4;transform:scaleX(0.83)">0.00</div>
<div class="t" style="left:884.00px;top:433.87px;width:50px;text-align:center;font-size:6.8px;color:#f4f4f4;transform:scaleX(0.83)">0.00</div>
<div class="t" style="left:905.00px;top:433.87px;width:50px;text-align:center;font-size:6.8px;color:#f4f4f4;transform:scaleX(0.83)">67.33</div>
<div class="t" style="left:934.00px;top:433.87px;width:50px;text-align:center;font-size:6.8px;color:#f4f4f4;transform:scaleX(0.83)">81.66</div>
<div class="t" style="left:955.00px;top:433.87px;width:50px;text-align:center;font-size:6.8px;color:#f4f4f4;transform:scaleX(0.83)">0.00</div>
<div class="t" style="left:984.40px;top:433.87px;width:50px;text-align:center;font-size:6.8px;color:#f4f4f4;transform:scaleX(0.83)">0.00</div>
<div class="t" style="left:221.60px;top:443.50px;width:50px;text-align:center;font-size:6.8px;color:#f4f4f4;transform:scaleX(0.83)">312.00</div>
<div class="t" style="left:254.00px;top:443.50px;width:50px;text-align:center;font-size:6.8px;color:#f4f4f4;transform:scaleX(0.83)">8.11</div>
<div class="t" style="left:290.60px;top:443.50px;width:50px;text-align:center;font-size:6.8px;color:#f4f4f4;transform:scaleX(0.83)">-95.78</div>
<div class="t" style="left:322.60px;top:443.50px;width:50px;text-align:center;font-size:6.8px;color:#f4f4f4;transform:scaleX(0.83)">-135.31</div>
<div class="t" style="left:362.70px;top:443.50px;width:50px;text-align:center;font-size:6.8px;color:#f4f4f4;transform:scaleX(0.83)">-118.82</div>
<div class="t" style="left:392.00px;top:443.50px;width:50px;text-align:center;font-size:6.8px;color:#f4f4f4;transform:scaleX(0.83)">-77.56</div>
<div class="t" style="left:416.00px;top:443.50px;width:50px;text-align:center;font-size:6.8px;color:#f4f4f4;transform:scaleX(0.83)">53.90</div>
<div class="t" style="left:441.60px;top:443.50px;width:50px;text-align:center;font-size:6.8px;color:#f4f4f4;transform:scaleX(0.83)">0.00</div>
<div class="t" style="left:469.00px;top:443.50px;width:50px;text-align:center;font-size:6.8px;color:#f4f4f4;transform:scaleX(0.83)">-23.25</div>
<div class="t" style="left:508.00px;top:443.50px;width:50px;text-align:center;font-size:6.8px;color:#f4f4f4;transform:scaleX(0.83)">-72.79</div>
<div class="t" style="left:547.50px;top:443.50px;width:50px;text-align:center;font-size:6.8px;color:#f4f4f4;transform:scaleX(0.83)">-252.31</div>
<div class="t" style="left:582.50px;top:443.50px;width:50px;text-align:center;font-size:6.8px;color:#f4f4f4;transform:scaleX(0.83)">-142.73</div>
<div class="t" style="left:609.00px;top:443.50px;width:50px;text-align:center;font-size:6.8px;color:#f4f4f4;transform:scaleX(0.83)">191.57</div>
<div class="t" style="left:636.00px;top:443.50px;width:50px;text-align:center;font-size:6.8px;color:#f4f4f4;transform:scaleX(0.83)">266.53</div>
<div class="t" style="left:669.00px;top:443.50px;width:50px;text-align:center;font-size:6.8px;color:#f4f4f4;transform:scaleX(0.83)">326.89</div>
<div class="t" style="left:689.50px;top:443.50px;width:50px;text-align:center;font-size:6.8px;color:#f4f4f4;transform:scaleX(0.83)">257.46</div>
<div class="t" style="left:723.00px;top:443.50px;width:50px;text-align:center;font-size:6.8px;color:#f4f4f4;transform:scaleX(0.83)">40.45</div>
<div class="t" style="left:745.00px;top:443.50px;width:50px;text-align:center;font-size:6.8px;color:#f4f4f4;transform:scaleX(0.83)">-78.35</div>
<div class="t" style="left:778.00px;top:443.50px;width:50px;text-align:center;font-size:6.8px;color:#f4f4f4;transform:scaleX(0.83)">-103.32</div>
<div class="t" style="left:819.00px;top:443.50px;width:50px;text-align:center;font-size:6.8px;color:#f4f4f4;transform:scaleX(0.83)">478.92</div>
<div class="t" style="left:855.00px;top:443.50px;width:50px;text-align:center;font-size:6.8px;color:#f4f4f4;transform:scaleX(0.83)">666.93</div>
<div class="t" style="left:881.00px;top:443.50px;width:50px;text-align:center;font-size:6.8px;color:#f4f4f4;transform:scaleX(0.83)">299.49</div>
<div class="t" style="left:909.70px;top:443.50px;width:50px;text-align:center;font-size:6.8px;color:#f4f4f4;transform:scaleX(0.83)">-128.46</div>
<div class="t" style="left:941.50px;top:443.50px;width:50px;text-align:center;font-size:6.8px;color:#f4f4f4;transform:scaleX(0.83)">-16.75</div>
<div class="t" style="left:968.00px;top:443.50px;width:50px;text-align:center;font-size:6.8px;color:#f4f4f4;transform:scaleX(0.83)">296.11</div>
<div class="t" style="left:221.60px;top:482.02px;width:50px;text-align:center;font-size:6.8px;color:#f4f4f4;transform:scaleX(0.83)">2996.73</div>
<div class="t" style="left:253.50px;top:482.02px;width:50px;text-align:center;font-size:6.8px;color:#f4f4f4;transform:scaleX(0.83)">8725.83</div>
<div class="t" style="left:290.20px;top:482.02px;width:50px;text-align:center;font-size:6.8px;color:#f4f4f4;transform:scaleX(0.83)">7082.53</div>
<div class="t" style="left:322.40px;top:482.02px;width:50px;text-align:center;font-size:6.8px;color:#f4f4f4;transform:scaleX(0.83)">1932.63</div>
<div class="t" style="left:362.30px;top:482.02px;width:50px;text-align:center;font-size:6.8px;color:#f4f4f4;transform:scaleX(0.83)">-4398.17</div>
<div class="t" style="left:398.00px;top:482.02px;width:50px;text-align:center;font-size:6.8px;color:#f4f4f4;transform:scaleX(0.83)">-8839.53</div>
<div class="t" style="left:432.60px;top:482.02px;width:50px;text-align:center;font-size:6.8px;color:#f4f4f4;transform:scaleX(0.83)">-8282.76</div>
<div class="t" style="left:468.80px;top:482.02px;width:50px;text-align:center;font-size:6.8px;color:#f4f4f4;transform:scaleX(0.83)">-8715.33</div>
<div class="t" style="left:507.80px;top:482.02px;width:50px;text-align:center;font-size:6.8px;color:#f4f4f4;transform:scaleX(0.83)">-10653.20</div>
<div class="t" style="left:547.90px;top:482.02px;width:50px;text-align:center;font-size:6.8px;color:#f4f4f4;transform:scaleX(0.83)">-19287.20</div>
<div class="t" style="left:581.90px;top:482.02px;width:50px;text-align:center;font-size:6.8px;color:#f4f4f4;transform:scaleX(0.83)">-28879.02</div>
<div class="t" style="left:625.40px;top:482.02px;width:50px;text-align:center;font-size:6.8px;color:#f4f4f4;transform:scaleX(0.83)">-23465.77</div>
<div class="t" style="left:669.40px;top:482.02px;width:50px;text-align:center;font-size:6.8px;color:#f4f4f4;transform:scaleX(0.83)">-7965.78</div>
<div class="t" style="left:713.30px;top:482.02px;width:50px;text-align:center;font-size:6.8px;color:#f4f4f4;transform:scaleX(0.83)">6262.49</div>
<div class="t" style="left:747.10px;top:482.02px;width:50px;text-align:center;font-size:6.8px;color:#f4f4f4;transform:scaleX(0.83)">6767.59</div>
<div class="t" style="left:781.00px;top:482.02px;width:50px;text-align:center;font-size:6.8px;color:#f4f4f4;transform:scaleX(0.83)">880.42</div>
<div class="t" style="left:819.00px;top:482.02px;width:50px;text-align:center;font-size:6.8px;color:#f4f4f4;transform:scaleX(0.83)">9517.12</div>
<div class="t" style="left:854.90px;top:482.02px;width:50px;text-align:center;font-size:6.8px;color:#f4f4f4;transform:scaleX(0.83)">37002.15</div>
<div class="t" style="left:892.00px;top:482.02px;width:50px;text-align:center;font-size:6.8px;color:#f4f4f4;transform:scaleX(0.83)">55964.95</div>
<div class="t" style="left:925.60px;top:482.02px;width:50px;text-align:center;font-size:6.8px;color:#f4f4f4;transform:scaleX(0.83)">53196.51</div>
<div class="t" style="left:968.30px;top:482.02px;width:50px;text-align:center;font-size:6.8px;color:#f4f4f4;transform:scaleX(0.83)">55605.89</div>
<div style="position:absolute;left:147.5px;top:490.5px;width:876.5px;height:10px;background:#f0f0f0"></div>
<div class="t" style="left:149.00px;top:492.3px;font-size:7px;color:#222;transform:scaleX(0.857);transform-origin:0 0;-webkit-text-stroke:0.12px #222;">X.Θ.=983.299</div>
<div style="position:absolute;left:451px;top:490.8px;width:0.8px;height:9.2px;background:#d4d4d4"></div>
<div style="position:absolute;left:147.5px;top:489.9px;width:876.5px;height:0.9px;background:#a8a8a8"></div>
<div style="position:absolute;left:584.4px;top:490.8px;width:0.8px;height:9.2px;background:#d4d4d4"></div>
<div style="position:absolute;left:147.5px;top:500.3px;width:876.5px;height:16px;background:linear-gradient(#fcfcfc,#f2f2f2 50%,#dedede)"></div>
<div style="position:absolute;left:199.2px;top:500.4px;width:59.3px;height:14.8px;border-radius:1.5px;background:#a2bae8"></div>
<div style="position:absolute;left:251.5px;top:501.5px;width:1px;height:13px;background:#5078c8"></div>
<svg width="1024" height="555"><text x="160.3" y="509.3" font-size="5.8" font-family="Liberation Sans" fill="#88b088" font-weight="bold">2D</text><path d="M175,502.8 L182,502.8 L182,505 L184.2,505 L178.5,510.8 L172.8,505 L175,505 Z" fill="#b4dcaa" stroke="#78a878" stroke-width="0.9"/><path d="M157,512.8 L189,512.8" stroke="#80b080" stroke-width="1" stroke-dasharray="0.8 0.8"/><path d="M209.5,508.5 C213,508.5 216,507.5 220,506 C224,504.5 227,504.5 231,506 C235,507.5 238,508.5 241.5,508.5 L241.5,512.5 L209.5,512.5 Z" fill="#b0dca8"/><path d="M209.5,508.5 C213,508.5 216,507.5 220,506 C224,504.5 227,504.5 231,506 C235,507.5 238,508.5 241.5,508.5" stroke="#78a878" stroke-width="0.7" fill="none"/><path d="M211,508.8 L240,508.8" stroke="#608860" stroke-width="0.6" stroke-dasharray="0.8 1"/><path d="M253.5,507 L257.5,507 L255.5,509.5 Z" fill="#111"/><path d="M269,507 L272.5,509.5 L278,503.5 L292.5,503.5 L298,509.5 L301.5,507 L301.5,512.5 L269,512.5 Z" fill="#a8d8a0" stroke="#80b080" stroke-width="0.6"/><path d="M285.3,502.5 L285.3,512.5" stroke="#70a070" stroke-width="0.6" stroke-dasharray="1 0.8"/><path d="M313.5,507.5 L317.5,507.5 L315.5,510 Z" fill="#111"/><text x="328" y="509.5" font-size="5.5" font-family="Liberation Sans" fill="#90b890">3D</text><path d="M344,503 L347.5,503 L351,507 L351,510 L344,510 Z" fill="#a8d4a0" stroke="#70a070" stroke-width="0.8"/><path d="M328,512.8 L360,512.8" stroke="#80b080" stroke-width="1" stroke-dasharray="0.8 0.8"/></svg>
<div style="position:absolute;left:147.2px;top:60px;width:0.8px;height:456px;background:#d8d8d8"></div>
<div style="position:absolute;left:0px;top:490.5px;width:139px;height:26px;background:#f0f0f0"></div>
<div style="position:absolute;left:0px;top:516.2px;width:1024px;height:1px;background:#9c9c9c"></div>
<div style="position:absolute;left:0px;top:517.2px;width:1024px;height:7px;background:#f0f0f0"></div>
<svg width="1024" height="555"><path d="M2,520.2 L1022,520.2" stroke="#c4c4c4" stroke-width="0.9" stroke-dasharray="1 1.6"/></svg>
<div style="position:absolute;left:495.2px;top:517.2px;width:33.5px;height:5.5px;box-sizing:border-box;border:1px solid #78c078;border-radius:3px;background:#b4dcb0"></div>
<svg width="1024" height="555"><path d="M509.8,518.4 L514.2,518.4 L512,521.4 Z" fill="#fff"/></svg>
<div class="hdr" style="left:0px;top:524.5px;width:1024px;height:12.8px;border-radius:0;border-left:none;border-right:none"></div>
<div class="circ" style="left:2.6px;top:527.3px;width:7.6px;height:7.6px;background:#f0b07c;border:0.8px solid #e09a60"></div>
<div style="position:absolute;left:4.6px;top:530.8px;width:3.5px;height:0.9px;background:#fff"></div>
<div class="t" style="left:12.10px;top:527.3px;font-size:7px;color:#222;transform:scaleX(0.835);transform-origin:0 0;-webkit-text-stroke:0.12px #222;">Μηνύματα</div>
<div style="position:absolute;left:1012px;top:527.4px;width:10.5px;height:7.3px;border-radius:4px;background:#f2b27a;border:0.6px solid #e8a060;box-sizing:border-box"></div>
<svg width="1024" height="555"><path d="M1015.5,529.3 L1018.8,532.7 M1018.8,529.3 L1015.5,532.7" stroke="#fff" stroke-width="0.8"/></svg>
<div style="position:absolute;left:0px;top:537.3px;width:1024px;height:17.7px;background:#f0f0f0"></div>
<div style="position:absolute;left:0px;top:537.5px;width:34px;height:11.5px;background:#fff"></div>
<div style="position:absolute;left:34px;top:538.5px;width:61px;height:10.5px;box-sizing:border-box;border:1px solid #dadada;border-bottom:none;background:#eaeaea"></div>
<div class="t" style="left:3.70px;top:540px;font-size:7px;color:#1a1a4a;transform:scaleX(0.829);transform-origin:0 0;-webkit-text-stroke:0.12px #1a1a4a;">Μηνύματα</div>
<div class="t" style="left:36.20px;top:540.8px;font-size:7px;color:#222;transform:scaleX(0.820);transform-origin:0 0;-webkit-text-stroke:0.12px #222;">Διάγραμμα Επιλύσεων</div>
<div style="position:absolute;left:1.8px;top:549.8px;width:1022.2px;height:3.2px;box-sizing:border-box;border:1px solid #a8a8b4;background:#fff"></div>
</body></html>
